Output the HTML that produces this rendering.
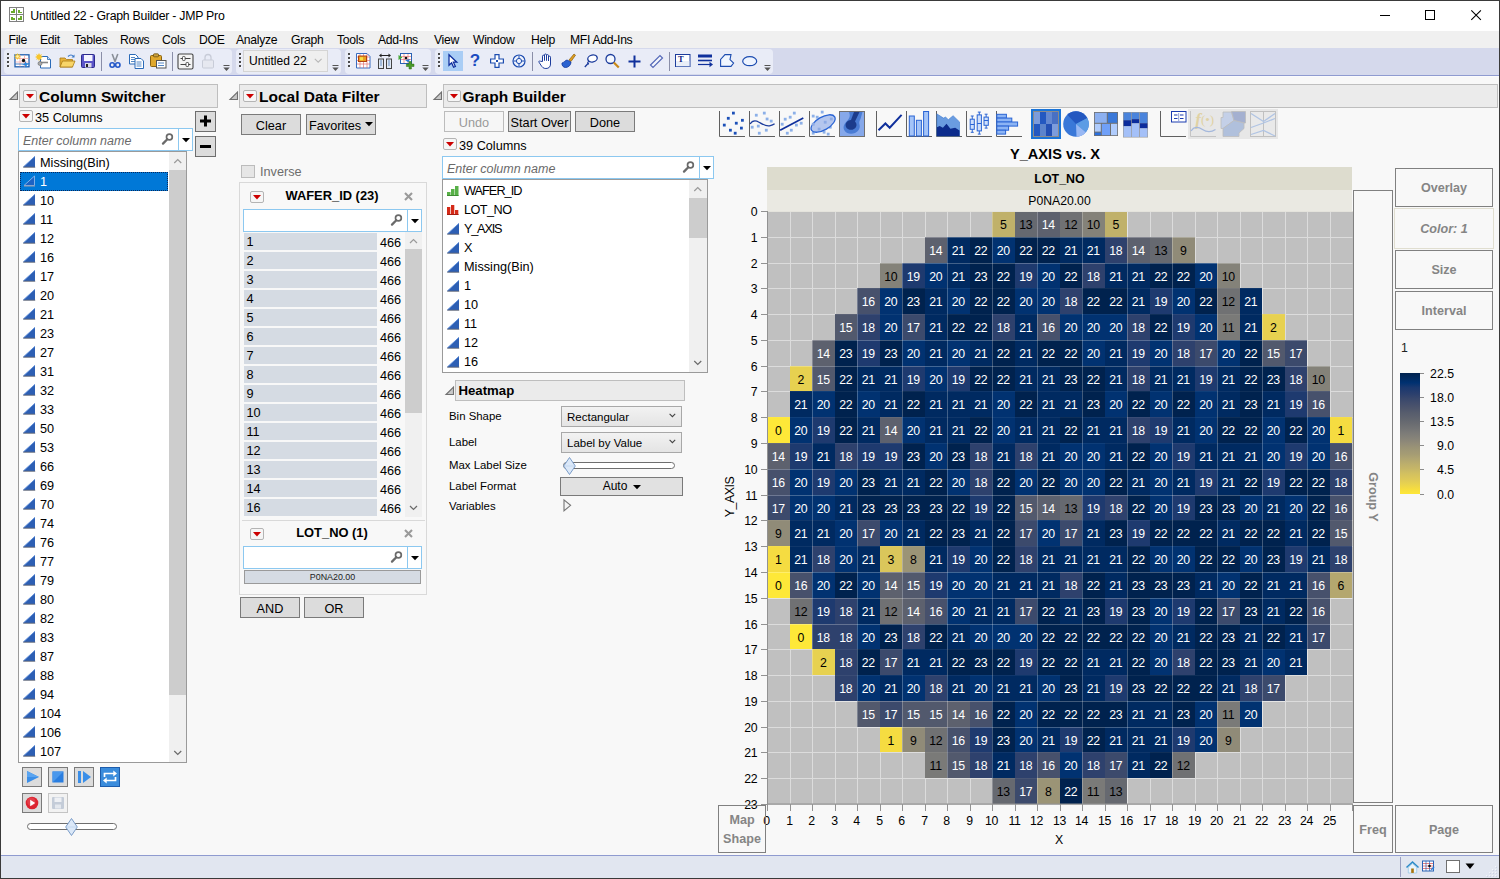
<!DOCTYPE html>
<html lang="en"><head><meta charset="utf-8"><title>Untitled 22 - Graph Builder - JMP Pro</title>
<style>
html,body{margin:0;padding:0;background:#f8f8f8;}
body{width:1500px;height:879px;overflow:hidden;font-family:"Liberation Sans", sans-serif;font-size:12.6px;color:#000;}
#app{position:relative;width:1500px;height:879px;overflow:hidden;background:#f8f8f8;}
#app div,#app svg{position:absolute;box-sizing:border-box;}
#app svg{overflow:visible;}
#app svg text{font-family:"Liberation Sans",sans-serif;}
</style></head><body><div id="app">
<div style="left:0px;top:0px;width:1500px;height:879px;background:#f8f8f8;border:1px solid #3a3a3a;"></div>
<div style="left:1px;top:1px;width:1498px;height:30px;background:#fff;"></div>
<svg style="left:9px;top:7px;" width="15" height="15" viewBox="0 0 15 15"><g shape-rendering="crispEdges"><rect x="0" y="0" width="15" height="15" fill="#808080"/><rect x="1" y="1" width="6" height="6" fill="#fff"/><rect x="8" y="1" width="6" height="6" fill="#fff"/><rect x="1" y="8" width="6" height="6" fill="#fff"/><rect x="8" y="8" width="6" height="6" fill="#fff"/><path d="M2 4h2V2h2v4H2zM9 3h2v2h2v1H9zM2 10h2v1h2v2H2zM9 11h2V9h2v4H9z" fill="#6aaa2c"/></g></svg>
<div style="top:7.800000000000001px;height:17px;line-height:17px;font-size:12.3px;white-space:pre;letter-spacing:-0.25px;left:30.3px;">Untitled 22 - Graph Builder - JMP Pro</div>
<svg style="left:1380px;top:10px;" width="11" height="11" viewBox="0 0 11 11"><path d="M0 5.5h10" stroke="#000" stroke-width="1"/></svg>
<svg style="left:1425px;top:10px;" width="11" height="11" viewBox="0 0 11 11"><rect x="0.5" y="0.5" width="9" height="9" fill="none" stroke="#000" stroke-width="1"/></svg>
<svg style="left:1471px;top:10px;" width="11" height="11" viewBox="0 0 11 11"><path d="M0.3 0.3l9.6 9.6M9.9 0.3l-9.6 9.6" stroke="#000" stroke-width="1.1"/></svg>
<div style="left:1px;top:31px;width:1498px;height:17px;background:#f0f0f0;"></div>
<div style="top:31.5px;height:17px;line-height:17px;font-size:12.2px;white-space:pre;letter-spacing:-0.3px;left:8.5px;">File</div>
<div style="top:31.5px;height:17px;line-height:17px;font-size:12.2px;white-space:pre;letter-spacing:-0.3px;left:40px;">Edit</div>
<div style="top:31.5px;height:17px;line-height:17px;font-size:12.2px;white-space:pre;letter-spacing:-0.3px;left:74px;">Tables</div>
<div style="top:31.5px;height:17px;line-height:17px;font-size:12.2px;white-space:pre;letter-spacing:-0.3px;left:120px;">Rows</div>
<div style="top:31.5px;height:17px;line-height:17px;font-size:12.2px;white-space:pre;letter-spacing:-0.3px;left:162px;">Cols</div>
<div style="top:31.5px;height:17px;line-height:17px;font-size:12.2px;white-space:pre;letter-spacing:-0.3px;left:199px;">DOE</div>
<div style="top:31.5px;height:17px;line-height:17px;font-size:12.2px;white-space:pre;letter-spacing:-0.3px;left:236px;">Analyze</div>
<div style="top:31.5px;height:17px;line-height:17px;font-size:12.2px;white-space:pre;letter-spacing:-0.3px;left:291px;">Graph</div>
<div style="top:31.5px;height:17px;line-height:17px;font-size:12.2px;white-space:pre;letter-spacing:-0.3px;left:337px;">Tools</div>
<div style="top:31.5px;height:17px;line-height:17px;font-size:12.2px;white-space:pre;letter-spacing:-0.3px;left:378px;">Add-Ins</div>
<div style="top:31.5px;height:17px;line-height:17px;font-size:12.2px;white-space:pre;letter-spacing:-0.3px;left:434px;">View</div>
<div style="top:31.5px;height:17px;line-height:17px;font-size:12.2px;white-space:pre;letter-spacing:-0.3px;left:473px;">Window</div>
<div style="top:31.5px;height:17px;line-height:17px;font-size:12.2px;white-space:pre;letter-spacing:-0.3px;left:531px;">Help</div>
<div style="top:31.5px;height:17px;line-height:17px;font-size:12.2px;white-space:pre;letter-spacing:-0.3px;left:570px;">MFI Add-Ins</div>
<div style="left:1px;top:48px;width:1498px;height:27px;background:#d5d9ec;"></div>
<div style="left:1px;top:75px;width:1498px;height:1px;background:#8f9bd0;"></div>
<div style="left:1px;top:76px;width:1498px;height:1px;background:#fbfbfd;"></div>
<div style="left:4px;top:49px;width:228px;height:25px;background:#e9ecf7;border-radius:4px;"></div>
<div style="left:236px;top:49px;width:105px;height:25px;background:#e9ecf7;border-radius:4px;"></div>
<div style="left:345px;top:49px;width:86px;height:25px;background:#e9ecf7;border-radius:4px;"></div>
<div style="left:435px;top:49px;width:338px;height:25px;background:#e9ecf7;border-radius:4px;"></div>
<div style="left:1px;top:855px;width:1498px;height:1px;background:#8f9bd0;"></div>
<div style="left:1px;top:856px;width:1498px;height:22px;background:#e1e6f0;"></div>
<div style="left:1400px;top:857px;width:1px;height:20px;background:#9aa0c0;"></div>
<div style="left:1446px;top:860px;width:14px;height:13px;background:#fff;border:1px solid #707070;"></div>
<svg style="left:1465px;top:862.8px;" width="10" height="7" viewBox="0 0 10 7"><path d="M0.5 0.5h9l-4.5 5.5z" fill="#000"/></svg>
<svg style="left:1406px;top:860.8px;" width="13" height="13" viewBox="0 0 13 13"><path d="M0.5 6.5L6.5 1l6 5.5" fill="none" stroke="#2a8ac8" stroke-width="1.6"/><path d="M2.3 6.3v5.7h8.4V6.3L6.5 2.6z" fill="#eaf4fb" stroke="#9cc8e4" stroke-width="0.8"/><rect x="5.2" y="7.5" width="2.6" height="4.4" fill="#a8740c"/></svg>
<svg style="left:1422px;top:860px;" width="13" height="13" viewBox="0 0 13 13"><rect x="0.5" y="1" width="11" height="10" fill="#fff" stroke="#2a62b4" stroke-width="1"/><path d="M1 3.5h10M1 6h10M1 8.5h10" stroke="#e04848" stroke-width="0.7"/><path d="M4 1v10M7.5 1v10" stroke="#2a62b4" stroke-width="0.7"/><circle cx="7.5" cy="6" r="1.3" fill="#111"/><path d="M9 8l3.5-1.2-1.2 3.7-0.8-1.3-1.6 1.6-0.6-0.6 1.6-1.6z" fill="#2a7ad4"/></svg>
<svg style="left:1485px;top:864px;" width="13" height="13" viewBox="0 0 13 13"><rect x="10" y="2" width="1.300" height="1.600" fill="#f6f8fc"/><rect x="10.7" y="2.8" width="1" height="1" fill="#b8c0d8"/><rect x="7" y="5" width="1.300" height="1.600" fill="#f6f8fc"/><rect x="7.7" y="5.8" width="1" height="1" fill="#b8c0d8"/><rect x="10" y="5" width="1.300" height="1.600" fill="#f6f8fc"/><rect x="10.7" y="5.8" width="1" height="1" fill="#b8c0d8"/><rect x="4" y="8" width="1.300" height="1.600" fill="#f6f8fc"/><rect x="4.7" y="8.8" width="1" height="1" fill="#b8c0d8"/><rect x="7" y="8" width="1.300" height="1.600" fill="#f6f8fc"/><rect x="7.7" y="8.8" width="1" height="1" fill="#b8c0d8"/><rect x="10" y="8" width="1.300" height="1.600" fill="#f6f8fc"/><rect x="10.7" y="8.8" width="1" height="1" fill="#b8c0d8"/><rect x="1" y="11" width="1.300" height="1.600" fill="#f6f8fc"/><rect x="1.7" y="11.8" width="1" height="1" fill="#b8c0d8"/><rect x="4" y="11" width="1.300" height="1.600" fill="#f6f8fc"/><rect x="4.7" y="11.8" width="1" height="1" fill="#b8c0d8"/><rect x="7" y="11" width="1.300" height="1.600" fill="#f6f8fc"/><rect x="7.7" y="11.8" width="1" height="1" fill="#b8c0d8"/><rect x="10" y="11" width="1.300" height="1.600" fill="#f6f8fc"/><rect x="10.7" y="11.8" width="1" height="1" fill="#b8c0d8"/></svg>
<svg style="left:7px;top:53px;" width="3" height="16" viewBox="0 0 3 16"><rect x="0" y="0" width="2" height="2" fill="#4a4a4a"/><rect x="1" y="1" width="2" height="2" fill="#ffffff" opacity="0.550"/><rect x="0.500" y="0.5" width="1.500" height="1.500" fill="#4a4a4a"/><rect x="0" y="4" width="2" height="2" fill="#4a4a4a"/><rect x="1" y="5" width="2" height="2" fill="#ffffff" opacity="0.550"/><rect x="0.500" y="4.5" width="1.500" height="1.500" fill="#4a4a4a"/><rect x="0" y="8" width="2" height="2" fill="#4a4a4a"/><rect x="1" y="9" width="2" height="2" fill="#ffffff" opacity="0.550"/><rect x="0.500" y="8.5" width="1.500" height="1.500" fill="#4a4a4a"/><rect x="0" y="12" width="2" height="2" fill="#4a4a4a"/><rect x="1" y="13" width="2" height="2" fill="#ffffff" opacity="0.550"/><rect x="0.500" y="12.5" width="1.500" height="1.500" fill="#4a4a4a"/></svg>
<svg style="left:14px;top:53px;" width="17" height="16" viewBox="0 0 17 16"><rect x="1" y="1.800" width="14" height="12" fill="#fff" stroke="#1f5fb0" stroke-width="1.300"/><path d="M1.500 5.500h13M1.500 9h13M6 2v11.500M10.500 2v11.500" stroke="#f0a0a0" stroke-width="0.700"/><path d="M1.500 11h13" stroke="#1f5fb0" stroke-width="0.800"/><circle cx="9.500" cy="7.500" r="1.700" fill="#111"/><path d="M11.500 8l0.900 2.300 3.800 0.200-3.200 1.300-1 3.200-1-2.700-3.500-0.300 3-1.300z" fill="#2a86dc"/><path d="M3.500 0l0.800 1.800 1.900-1-1 1.900L7 3.500l-1.800 0.800 1 1.900-1.900-1L3.500 7l-0.800-1.800-1.900 1 1-1.900L0 3.500l1.800-0.800-1-1.900 1.900 1z" fill="#f7c52e"/><circle cx="3.500" cy="3.500" r="1.300" fill="#fff2b0"/></svg>
<svg style="left:36px;top:53px;" width="16" height="16" viewBox="0 0 16 16"><path d="M4.5 3.5h7l3 3v8.5h-10z" fill="#fff" stroke="#2a6ab8" stroke-width="1"/><path d="M11.5 3.5v3h3" fill="#cfe0f5" stroke="#2a6ab8" stroke-width="0.8"/><path d="M3 9.5h9" stroke="#888" stroke-width="1.6"/><circle cx="4" cy="10.5" r="2" fill="#aaa" stroke="#666" stroke-width="0.6"/><path d="M3 0l1 2 2-1-1 2 2 1-2 1 1 2-2-1-1 2-1-2-2 1 1-2-2-1 2-1-1-2 2 1z" fill="#f7c52e"/></svg>
<svg style="left:59px;top:53px;" width="16" height="16" viewBox="0 0 16 16"><path d="M1 5h5l1.5 1.5h6V14H1z" fill="#e8b33a" stroke="#a87a14" stroke-width="0.8"/><path d="M1 14l2.5-6H16l-2.5 6z" fill="#f8d568" stroke="#a87a14" stroke-width="0.8"/><path d="M9 3.5c2-2 4-2 5.5 0" fill="none" stroke="#3a78c8" stroke-width="1.2"/><path d="M15.5 1.5v3h-3z" fill="#3a78c8"/></svg>
<svg style="left:80px;top:53px;" width="16" height="16" viewBox="0 0 16 16"><rect x="1.5" y="1.5" width="13" height="13" rx="1" fill="#5a54c8" stroke="#2c2a8c" stroke-width="1"/><rect x="4" y="2" width="8.5" height="6" fill="#f4f4ff"/><rect x="5" y="10" width="6.5" height="4.5" fill="#d8d8e8"/><rect x="6" y="11" width="2" height="3" fill="#222"/></svg>
<div style="left:101px;top:52px;width:1px;height:19px;background:#8a8ea8;"></div>
<svg style="left:109px;top:53px;" width="12" height="16" viewBox="0 0 12 16"><path d="M3.2 1l3 8M8.8 1l-3 8" stroke="#8a8f98" stroke-width="1.6" fill="none"/><circle cx="3.2" cy="12" r="2.2" fill="none" stroke="#2458c8" stroke-width="1.6"/><circle cx="8.8" cy="12" r="2.2" fill="none" stroke="#2458c8" stroke-width="1.6"/></svg>
<svg style="left:129px;top:54px;" width="15" height="15" viewBox="0 0 15 15"><path d="M0.5 0.5h6l2.5 2.5v7h-8.5z" fill="#fff" stroke="#2a6ab8" stroke-width="1"/><path d="M2 3.5h4M2 5.5h5M2 7.5h5" stroke="#2a6ab8" stroke-width="0.8"/><path d="M6 4.5h6l2.5 2.5v7.5H6z" fill="#fff" stroke="#2a6ab8" stroke-width="1"/><path d="M7.5 8h5M7.5 10h5M7.5 12h5" stroke="#2a6ab8" stroke-width="0.8"/></svg>
<svg style="left:150px;top:53px;" width="17" height="16" viewBox="0 0 17 16"><rect x="0.5" y="2.5" width="11" height="11" rx="1" fill="#e0a82c" stroke="#8a6410" stroke-width="1"/><rect x="3.5" y="0.8" width="5" height="3" rx="0.8" fill="#caa040" stroke="#6c5010" stroke-width="0.8"/><rect x="6.5" y="7.5" width="9.5" height="7.5" fill="#fff" stroke="#555" stroke-width="1"/><path d="M8 10h6M8 12.5h6" stroke="#2a6ab8" stroke-width="0.8"/></svg>
<div style="left:172px;top:52px;width:1px;height:19px;background:#8a8ea8;"></div>
<svg style="left:177px;top:53px;" width="17" height="17" viewBox="0 0 17 17"><rect x="1" y="1" width="15" height="15" rx="1.5" fill="#f4f4f4" stroke="#444" stroke-width="1.1"/><path d="M3.5 5.5h10M3.5 11.5h10" stroke="#444" stroke-width="1"/><rect x="5.5" y="3.5" width="2.6" height="4" rx="0.8" fill="#fff" stroke="#444" stroke-width="0.9"/><rect x="9" y="9.5" width="2.6" height="4" rx="0.8" fill="#fff" stroke="#444" stroke-width="0.9"/></svg>
<svg style="left:201px;top:53px;" width="14" height="16" viewBox="0 0 14 16"><path d="M4 7V4.5a3 3 0 016 0V7" fill="none" stroke="#c8ccd8" stroke-width="1.3"/><rect x="1.5" y="7" width="11" height="8" rx="1" fill="#e6e8f0" stroke="#c8ccd8" stroke-width="1"/></svg>
<svg style="left:223px;top:65px;" width="7" height="7" viewBox="0 0 7 7"><path d="M0.5 0.5h6" stroke="#555" stroke-width="1"/><path d="M0.3 2.6h6.4L3.5 6z" fill="#555"/></svg>
<svg style="left:239px;top:53px;" width="3" height="16" viewBox="0 0 3 16"><rect x="0" y="0" width="2" height="2" fill="#4a4a4a"/><rect x="1" y="1" width="2" height="2" fill="#ffffff" opacity="0.550"/><rect x="0.500" y="0.5" width="1.500" height="1.500" fill="#4a4a4a"/><rect x="0" y="4" width="2" height="2" fill="#4a4a4a"/><rect x="1" y="5" width="2" height="2" fill="#ffffff" opacity="0.550"/><rect x="0.500" y="4.5" width="1.500" height="1.500" fill="#4a4a4a"/><rect x="0" y="8" width="2" height="2" fill="#4a4a4a"/><rect x="1" y="9" width="2" height="2" fill="#ffffff" opacity="0.550"/><rect x="0.500" y="8.5" width="1.500" height="1.500" fill="#4a4a4a"/><rect x="0" y="12" width="2" height="2" fill="#4a4a4a"/><rect x="1" y="13" width="2" height="2" fill="#ffffff" opacity="0.550"/><rect x="0.500" y="12.5" width="1.500" height="1.500" fill="#4a4a4a"/></svg>
<div style="left:243px;top:50px;width:85px;height:22px;background:#efefef;border:1px solid #d4d4d4;"></div>
<div style="top:52.5px;height:17px;line-height:17px;font-size:12.05px;white-space:pre;left:249px;">Untitled 22</div>
<svg style="left:314px;top:58px;" width="9" height="6" viewBox="0 0 9 6"><path d="M0.8 0.8l3.4 3.4 3.4-3.4" fill="none" stroke="#b8b8b8" stroke-width="1.1"/></svg>
<svg style="left:332px;top:65px;" width="7" height="7" viewBox="0 0 7 7"><path d="M0.5 0.5h6" stroke="#555" stroke-width="1"/><path d="M0.3 2.6h6.4L3.5 6z" fill="#555"/></svg>
<svg style="left:348px;top:53px;" width="3" height="16" viewBox="0 0 3 16"><rect x="0" y="0" width="2" height="2" fill="#4a4a4a"/><rect x="1" y="1" width="2" height="2" fill="#ffffff" opacity="0.550"/><rect x="0.500" y="0.5" width="1.500" height="1.500" fill="#4a4a4a"/><rect x="0" y="4" width="2" height="2" fill="#4a4a4a"/><rect x="1" y="5" width="2" height="2" fill="#ffffff" opacity="0.550"/><rect x="0.500" y="4.5" width="1.500" height="1.500" fill="#4a4a4a"/><rect x="0" y="8" width="2" height="2" fill="#4a4a4a"/><rect x="1" y="9" width="2" height="2" fill="#ffffff" opacity="0.550"/><rect x="0.500" y="8.5" width="1.500" height="1.500" fill="#4a4a4a"/><rect x="0" y="12" width="2" height="2" fill="#4a4a4a"/><rect x="1" y="13" width="2" height="2" fill="#ffffff" opacity="0.550"/><rect x="0.500" y="12.5" width="1.500" height="1.500" fill="#4a4a4a"/></svg>
<svg style="left:356px;top:53px;" width="15" height="16" viewBox="0 0 15 16"><path d="M0.5 0.5h10.5l3 3v11.5H0.5z" fill="#fff" stroke="#3a6cc0" stroke-width="1"/><path d="M1 4h13M1 7.5h13M1 11h13M4 1v14M7.5 1v14M11 1v14" stroke="#e06060" stroke-width="0.6"/><rect x="2.5" y="3" width="8" height="5.5" fill="#e8a020" stroke="#b04010" stroke-width="1"/><rect x="4" y="4.2" width="3" height="3" fill="#f8e048"/></svg>
<svg style="left:377px;top:53px;" width="16" height="16" viewBox="0 0 16 16"><path d="M3 2.5h10" stroke="#222" stroke-width="1"/><path d="M2 2.5l2.5-2v4zM14 2.5l-2.500-2v4z" fill="#222"/><rect x="1.5" y="6" width="5" height="9.5" fill="#dfe8f4" stroke="#444" stroke-width="1"/><rect x="9.5" y="6" width="5" height="9.5" fill="#dfe8f4" stroke="#444" stroke-width="1"/><path d="M3 8h2M3 10h2M3 12h2M11 8h2M11 10h2M11 12h2" stroke="#4a78b8" stroke-width="0.8"/></svg>
<svg style="left:398px;top:53px;" width="17" height="16" viewBox="0 0 17 16"><rect x="2.500" y="0.5" width="11" height="10" fill="#fff" stroke="#2a62b4" stroke-width="1"/><path d="M3 3.500h10M3 6.500h10M6 1v9M10 1v9" stroke="#e06060" stroke-width="0.6"/><path d="M0.5 2l4 2.500-4 2.500z" fill="#48a838"/><circle cx="8" cy="5" r="1.300" fill="#111"/><path d="M7 7l5-1-1.500 3.500z" fill="#2a7ad4"/><path d="M11 8.500h2.400v2.600H16v2.400h-2.600V16H11v-2.500H8.400v-2.400H11z" fill="#4a9c2a" stroke="#2c6c14" stroke-width="0.5"/></svg>
<svg style="left:422px;top:65px;" width="7" height="7" viewBox="0 0 7 7"><path d="M0.5 0.5h6" stroke="#555" stroke-width="1"/><path d="M0.3 2.6h6.4L3.5 6z" fill="#555"/></svg>
<svg style="left:438px;top:53px;" width="3" height="16" viewBox="0 0 3 16"><rect x="0" y="0" width="2" height="2" fill="#4a4a4a"/><rect x="1" y="1" width="2" height="2" fill="#ffffff" opacity="0.550"/><rect x="0.500" y="0.5" width="1.500" height="1.500" fill="#4a4a4a"/><rect x="0" y="4" width="2" height="2" fill="#4a4a4a"/><rect x="1" y="5" width="2" height="2" fill="#ffffff" opacity="0.550"/><rect x="0.500" y="4.5" width="1.500" height="1.500" fill="#4a4a4a"/><rect x="0" y="8" width="2" height="2" fill="#4a4a4a"/><rect x="1" y="9" width="2" height="2" fill="#ffffff" opacity="0.550"/><rect x="0.500" y="8.5" width="1.500" height="1.500" fill="#4a4a4a"/><rect x="0" y="12" width="2" height="2" fill="#4a4a4a"/><rect x="1" y="13" width="2" height="2" fill="#ffffff" opacity="0.550"/><rect x="0.500" y="12.5" width="1.500" height="1.500" fill="#4a4a4a"/></svg>
<div style="left:443px;top:51px;width:20px;height:20px;background:#a9cdf5;"></div>
<svg style="left:448px;top:54px;" width="10" height="15" viewBox="0 0 10 15"><path d="M1 0.800v10.500l2.600-2.400 2 4.400 1.800-0.800-2-4.300h3.400z" fill="#fff" stroke="#0c2c9c" stroke-width="1.250"/></svg>
<div style="top:51.0px;height:20px;line-height:20px;font-size:17px;white-space:pre;font-weight:bold;color:#1c4cc0;left:468.0px;width:14px;text-align:center;">?</div>
<svg style="left:490px;top:54px;" width="14" height="14" viewBox="0 0 14 14"><path d="M5 0.600h4v4.400h4.400v4H9v4.400H5V9H0.600V5H5z" fill="#fff" stroke="#1c4cb0" stroke-width="1.2"/><rect x="6" y="6" width="2" height="2" fill="#1c4cb0"/></svg>
<svg style="left:512px;top:54px;" width="14" height="14" viewBox="0 0 14 14"><circle cx="7" cy="7" r="6" fill="#eef2fc" stroke="#1c4cb0" stroke-width="1.200"/><circle cx="7" cy="7" r="2.600" fill="none" stroke="#1c4cb0" stroke-width="1"/><path d="M7 1.500v3M7 9.500v3M1.500 7h3M9.500 7h3" stroke="#1c4cb0" stroke-width="1"/></svg>
<div style="left:532px;top:52px;width:1px;height:19px;background:#8a8ea8;"></div>
<svg style="left:538px;top:53px;" width="17" height="16" viewBox="0 0 17 16"><path d="M4.500 8.500V3.200a1 1 0 012 0V7.500 2a1 1 0 012 0v5.500V2.600a1 1 0 012 0v5.400V4.200a1 1 0 012 0V11c0 2.800-1.600 4.500-4.600 4.500-2.600 0-3.600-1.200-5-3.400L1 9.200c-0.500-1 0.800-1.800 1.600-0.900z" fill="#fff" stroke="#1c3c9c" stroke-width="1"/></svg>
<svg style="left:561px;top:53px;" width="15" height="16" viewBox="0 0 15 16"><path d="M8 7l5-6 1.500 1.200L10 8.500z" fill="#e0a020" stroke="#8a5c0c" stroke-width="0.700"/><path d="M1 10c2-0.500 3-2.500 5-3l4 2c0 3-2.500 5.500-5.500 5.500C2.500 14.500 0.500 12.500 1 10z" fill="#2a62d0" stroke="#1438a0" stroke-width="0.800"/></svg>
<svg style="left:584px;top:54px;" width="14" height="14" viewBox="0 0 14 14"><ellipse cx="8.500" cy="4.500" rx="4.800" ry="3.400" fill="#fff" stroke="#1c3c9c" stroke-width="1.300" transform="rotate(-12 8.500 4.500)"/><path d="M5 7.500c-1.500 0.500-2 2 0 2.500M4.500 9L0.800 13" fill="none" stroke="#1c3c9c" stroke-width="1.300"/></svg>
<svg style="left:605px;top:53px;" width="15" height="16" viewBox="0 0 15 16"><circle cx="5.500" cy="6" r="4.500" fill="#f4f8ff" stroke="#1c3c9c" stroke-width="1.300"/><path d="M8.800 9.500l5 5" stroke="#c88818" stroke-width="2.200"/></svg>
<svg style="left:628px;top:55px;" width="13" height="13" viewBox="0 0 13 13"><path d="M6.500 0.500v12M0.500 6.500h12" stroke="#10309c" stroke-width="2"/></svg>
<svg style="left:649px;top:54px;" width="15" height="15" viewBox="0 0 15 15"><path d="M1.500 11L11 1.500l2.500 2.500L4 13.500z" fill="#f4f6fc" stroke="#5468b8" stroke-width="1.200"/></svg>
<div style="left:669px;top:52px;width:1px;height:19px;background:#8a8ea8;"></div>
<svg style="left:675px;top:54px;" width="16" height="14" viewBox="0 0 16 14"><rect x="0.500" y="0.500" width="14.500" height="12" fill="#fff" stroke="#1c3c9c" stroke-width="1"/><path d="M1 8h14M1 10h14M1 12h14" stroke="#c8d4ec" stroke-width="0.800"/><text x="5.800" y="7.600" font-size="8.500" font-weight="bold" text-anchor="middle" fill="#10207c" style="font-family:'Liberation Serif',serif">T</text></svg>
<svg style="left:698px;top:54px;" width="16" height="14" viewBox="0 0 16 14"><path d="M0 2h14" stroke="#10309c" stroke-width="3"/><path d="M0 6.500h14" stroke="#10309c" stroke-width="1.600"/><path d="M0 10.500h12" stroke="#10309c" stroke-width="1.200"/><path d="M11.500 7.800l3.500 2.700-3.500 2.700z" fill="#10309c"/></svg>
<svg style="left:720px;top:54px;" width="15" height="14" viewBox="0 0 15 14"><path d="M0.600 12.400V5.500L5 0.600h6l-1 5 3.600 3.400-2.600 3.400z" fill="#f0f6ff" stroke="#1c4cb0" stroke-width="1.100"/></svg>
<svg style="left:742px;top:56px;" width="16" height="11" viewBox="0 0 16 11"><ellipse cx="7.700" cy="5.200" rx="7" ry="4.500" fill="#eef4ff" stroke="#1c4cb0" stroke-width="1.200"/></svg>
<svg style="left:764px;top:65px;" width="7" height="7" viewBox="0 0 7 7"><path d="M0.5 0.5h6" stroke="#555" stroke-width="1"/><path d="M0.3 2.6h6.4L3.5 6z" fill="#555"/></svg>
<div style="left:19px;top:84px;width:199px;height:24px;background:#ebebeb;border:1px solid #bebebe;"></div>
<svg style="left:9px;top:91px;" width="10" height="10" viewBox="0 0 10 10"><path d="M8.500 1V8.500H1z" fill="#c8c8c8" stroke="#707070" stroke-width="1.100" stroke-linejoin="miter"/></svg>
<div style="left:23px;top:90px;width:14px;height:12px;background:#f6f6f6;border:1px solid #b4b4b4;border-radius:2px;"></div>
<svg style="left:26px;top:94px;" width="8" height="5" viewBox="0 0 8 5"><path d="M0 0h8L4 4.500z" fill="#cc0000"/></svg>
<div style="top:85.5px;height:22px;line-height:22px;font-size:15.5px;white-space:pre;font-weight:bold;left:39px;">Column Switcher</div>
<div style="left:19px;top:110px;width:14px;height:12px;background:#f6f6f6;border:1px solid #b4b4b4;border-radius:2px;"></div>
<svg style="left:22px;top:114px;" width="8" height="5" viewBox="0 0 8 5"><path d="M0 0h8L4 4.500z" fill="#cc0000"/></svg>
<div style="top:108.8px;height:18px;line-height:18px;font-size:12.7px;white-space:pre;left:35px;">35 Columns</div>
<div style="left:18px;top:128px;width:175px;height:23px;background:#fff;border:1px solid #8cc8f0;"></div>
<div style="left:178px;top:129px;width:1px;height:21px;background:#8cc8f0;"></div>
<div style="top:131.7px;height:18px;line-height:18px;font-size:12.5px;white-space:pre;font-style:italic;color:#6a6a6a;left:23px;">Enter column name</div>
<svg style="left:161px;top:132px;" width="13" height="14" viewBox="0 0 13 14"><circle cx="8.400" cy="5" r="2.900" fill="none" stroke="#6a6a6a" stroke-width="1.700"/><path d="M6.300 7.300L2 11.600" stroke="#6a6a6a" stroke-width="2.300" stroke-linecap="round"/></svg>
<svg style="left:181.5px;top:137.5px;" width="8" height="5" viewBox="0 0 8 5"><path d="M0 0h8L4 4.200z" fill="#000"/></svg>
<div style="left:195px;top:111px;width:21px;height:21px;background:#dcdcdc;border:1px solid #6e6e6e;"></div>
<svg style="left:195px;top:111px;" width="21" height="21" viewBox="0 0 21 21"><path d="M10.500 4.500v11M5 10h11" stroke="#000" stroke-width="3"/></svg>
<div style="left:195px;top:136px;width:21px;height:21px;background:#dcdcdc;border:1px solid #6e6e6e;"></div>
<svg style="left:195px;top:136px;" width="21" height="21" viewBox="0 0 21 21"><path d="M5 10.500h11" stroke="#000" stroke-width="3"/></svg>
<div style="left:18px;top:151px;width:169px;height:612px;background:#fff;border:1px solid #9a9a9a;"></div>
<div style="left:168.5px;top:152px;width:17.5px;height:610px;background:#f0f0f0;"></div>
<div style="left:168.5px;top:170px;width:17.5px;height:525px;background:#cdcdcd;"></div>
<svg style="left:168.5px;top:157px;" width="17.5" height="8" viewBox="0 0 17.5 8"><path d="M5.25 6l3.500-3.500 3.500 3.500" fill="none" stroke="#9a9a9a" stroke-width="1.200"/></svg>
<svg style="left:168.5px;top:749px;" width="17.5" height="8" viewBox="0 0 17.5 8"><path d="M5.25 2l3.500 3.500 3.500-3.500" fill="none" stroke="#6a6a6a" stroke-width="1.200"/></svg>
<svg style="left:23px;top:156px;" width="13" height="12" viewBox="0 0 13 12"><path d="M12 0.300V11H0.300z" fill="#2d5fb4"/><path d="M0.300 11L12 0.300" stroke="#5c8cd8" stroke-width="0.900"/><path d="M0.300 11.200H12.200" stroke="#5c6478" stroke-width="1"/></svg>
<div style="top:153.5px;height:18px;line-height:18px;font-size:12.7px;white-space:pre;left:40px;">Missing(Bin)</div>
<div style="left:20px;top:172px;width:148px;height:19px;background:#0078d7;border:1px dotted #0a2a5c;"></div>
<svg style="left:23px;top:175px;" width="13" height="12" viewBox="0 0 13 12"><path d="M11.500 1V10.500H1z" fill="#1c62c4" stroke="#8cb8ec" stroke-width="0.900" stroke-linejoin="round"/><path d="M1 11H12" stroke="#9a9aa8" stroke-width="1"/></svg>
<div style="top:172.5px;height:18px;line-height:18px;font-size:12.7px;white-space:pre;color:#fff;left:40px;">1</div>
<svg style="left:23px;top:194px;" width="13" height="12" viewBox="0 0 13 12"><path d="M12 0.300V11H0.300z" fill="#2d5fb4"/><path d="M0.300 11L12 0.300" stroke="#5c8cd8" stroke-width="0.900"/><path d="M0.300 11.200H12.200" stroke="#5c6478" stroke-width="1"/></svg>
<div style="top:191.5px;height:18px;line-height:18px;font-size:12.7px;white-space:pre;left:40px;">10</div>
<svg style="left:23px;top:213px;" width="13" height="12" viewBox="0 0 13 12"><path d="M12 0.300V11H0.300z" fill="#2d5fb4"/><path d="M0.300 11L12 0.300" stroke="#5c8cd8" stroke-width="0.900"/><path d="M0.300 11.200H12.200" stroke="#5c6478" stroke-width="1"/></svg>
<div style="top:210.5px;height:18px;line-height:18px;font-size:12.7px;white-space:pre;left:40px;">11</div>
<svg style="left:23px;top:232px;" width="13" height="12" viewBox="0 0 13 12"><path d="M12 0.300V11H0.300z" fill="#2d5fb4"/><path d="M0.300 11L12 0.300" stroke="#5c8cd8" stroke-width="0.900"/><path d="M0.300 11.200H12.200" stroke="#5c6478" stroke-width="1"/></svg>
<div style="top:229.5px;height:18px;line-height:18px;font-size:12.7px;white-space:pre;left:40px;">12</div>
<svg style="left:23px;top:251px;" width="13" height="12" viewBox="0 0 13 12"><path d="M12 0.300V11H0.300z" fill="#2d5fb4"/><path d="M0.300 11L12 0.300" stroke="#5c8cd8" stroke-width="0.900"/><path d="M0.300 11.200H12.200" stroke="#5c6478" stroke-width="1"/></svg>
<div style="top:248.5px;height:18px;line-height:18px;font-size:12.7px;white-space:pre;left:40px;">16</div>
<svg style="left:23px;top:270px;" width="13" height="12" viewBox="0 0 13 12"><path d="M12 0.300V11H0.300z" fill="#2d5fb4"/><path d="M0.300 11L12 0.300" stroke="#5c8cd8" stroke-width="0.900"/><path d="M0.300 11.200H12.200" stroke="#5c6478" stroke-width="1"/></svg>
<div style="top:267.5px;height:18px;line-height:18px;font-size:12.7px;white-space:pre;left:40px;">17</div>
<svg style="left:23px;top:289px;" width="13" height="12" viewBox="0 0 13 12"><path d="M12 0.300V11H0.300z" fill="#2d5fb4"/><path d="M0.300 11L12 0.300" stroke="#5c8cd8" stroke-width="0.900"/><path d="M0.300 11.200H12.200" stroke="#5c6478" stroke-width="1"/></svg>
<div style="top:286.5px;height:18px;line-height:18px;font-size:12.7px;white-space:pre;left:40px;">20</div>
<svg style="left:23px;top:308px;" width="13" height="12" viewBox="0 0 13 12"><path d="M12 0.300V11H0.300z" fill="#2d5fb4"/><path d="M0.300 11L12 0.300" stroke="#5c8cd8" stroke-width="0.900"/><path d="M0.300 11.200H12.200" stroke="#5c6478" stroke-width="1"/></svg>
<div style="top:305.5px;height:18px;line-height:18px;font-size:12.7px;white-space:pre;left:40px;">21</div>
<svg style="left:23px;top:327px;" width="13" height="12" viewBox="0 0 13 12"><path d="M12 0.300V11H0.300z" fill="#2d5fb4"/><path d="M0.300 11L12 0.300" stroke="#5c8cd8" stroke-width="0.900"/><path d="M0.300 11.200H12.200" stroke="#5c6478" stroke-width="1"/></svg>
<div style="top:324.5px;height:18px;line-height:18px;font-size:12.7px;white-space:pre;left:40px;">23</div>
<svg style="left:23px;top:346px;" width="13" height="12" viewBox="0 0 13 12"><path d="M12 0.300V11H0.300z" fill="#2d5fb4"/><path d="M0.300 11L12 0.300" stroke="#5c8cd8" stroke-width="0.900"/><path d="M0.300 11.200H12.200" stroke="#5c6478" stroke-width="1"/></svg>
<div style="top:343.5px;height:18px;line-height:18px;font-size:12.7px;white-space:pre;left:40px;">27</div>
<svg style="left:23px;top:365px;" width="13" height="12" viewBox="0 0 13 12"><path d="M12 0.300V11H0.300z" fill="#2d5fb4"/><path d="M0.300 11L12 0.300" stroke="#5c8cd8" stroke-width="0.900"/><path d="M0.300 11.200H12.200" stroke="#5c6478" stroke-width="1"/></svg>
<div style="top:362.5px;height:18px;line-height:18px;font-size:12.7px;white-space:pre;left:40px;">31</div>
<svg style="left:23px;top:384px;" width="13" height="12" viewBox="0 0 13 12"><path d="M12 0.300V11H0.300z" fill="#2d5fb4"/><path d="M0.300 11L12 0.300" stroke="#5c8cd8" stroke-width="0.900"/><path d="M0.300 11.200H12.200" stroke="#5c6478" stroke-width="1"/></svg>
<div style="top:381.5px;height:18px;line-height:18px;font-size:12.7px;white-space:pre;left:40px;">32</div>
<svg style="left:23px;top:403px;" width="13" height="12" viewBox="0 0 13 12"><path d="M12 0.300V11H0.300z" fill="#2d5fb4"/><path d="M0.300 11L12 0.300" stroke="#5c8cd8" stroke-width="0.900"/><path d="M0.300 11.200H12.200" stroke="#5c6478" stroke-width="1"/></svg>
<div style="top:400.5px;height:18px;line-height:18px;font-size:12.7px;white-space:pre;left:40px;">33</div>
<svg style="left:23px;top:422px;" width="13" height="12" viewBox="0 0 13 12"><path d="M12 0.300V11H0.300z" fill="#2d5fb4"/><path d="M0.300 11L12 0.300" stroke="#5c8cd8" stroke-width="0.900"/><path d="M0.300 11.200H12.200" stroke="#5c6478" stroke-width="1"/></svg>
<div style="top:419.5px;height:18px;line-height:18px;font-size:12.7px;white-space:pre;left:40px;">50</div>
<svg style="left:23px;top:441px;" width="13" height="12" viewBox="0 0 13 12"><path d="M12 0.300V11H0.300z" fill="#2d5fb4"/><path d="M0.300 11L12 0.300" stroke="#5c8cd8" stroke-width="0.900"/><path d="M0.300 11.200H12.200" stroke="#5c6478" stroke-width="1"/></svg>
<div style="top:438.5px;height:18px;line-height:18px;font-size:12.7px;white-space:pre;left:40px;">53</div>
<svg style="left:23px;top:460px;" width="13" height="12" viewBox="0 0 13 12"><path d="M12 0.300V11H0.300z" fill="#2d5fb4"/><path d="M0.300 11L12 0.300" stroke="#5c8cd8" stroke-width="0.900"/><path d="M0.300 11.200H12.200" stroke="#5c6478" stroke-width="1"/></svg>
<div style="top:457.5px;height:18px;line-height:18px;font-size:12.7px;white-space:pre;left:40px;">66</div>
<svg style="left:23px;top:479px;" width="13" height="12" viewBox="0 0 13 12"><path d="M12 0.300V11H0.300z" fill="#2d5fb4"/><path d="M0.300 11L12 0.300" stroke="#5c8cd8" stroke-width="0.900"/><path d="M0.300 11.200H12.200" stroke="#5c6478" stroke-width="1"/></svg>
<div style="top:476.5px;height:18px;line-height:18px;font-size:12.7px;white-space:pre;left:40px;">69</div>
<svg style="left:23px;top:498px;" width="13" height="12" viewBox="0 0 13 12"><path d="M12 0.300V11H0.300z" fill="#2d5fb4"/><path d="M0.300 11L12 0.300" stroke="#5c8cd8" stroke-width="0.900"/><path d="M0.300 11.200H12.200" stroke="#5c6478" stroke-width="1"/></svg>
<div style="top:495.5px;height:18px;line-height:18px;font-size:12.7px;white-space:pre;left:40px;">70</div>
<svg style="left:23px;top:517px;" width="13" height="12" viewBox="0 0 13 12"><path d="M12 0.300V11H0.300z" fill="#2d5fb4"/><path d="M0.300 11L12 0.300" stroke="#5c8cd8" stroke-width="0.900"/><path d="M0.300 11.200H12.200" stroke="#5c6478" stroke-width="1"/></svg>
<div style="top:514.5px;height:18px;line-height:18px;font-size:12.7px;white-space:pre;left:40px;">74</div>
<svg style="left:23px;top:536px;" width="13" height="12" viewBox="0 0 13 12"><path d="M12 0.300V11H0.300z" fill="#2d5fb4"/><path d="M0.300 11L12 0.300" stroke="#5c8cd8" stroke-width="0.900"/><path d="M0.300 11.200H12.200" stroke="#5c6478" stroke-width="1"/></svg>
<div style="top:533.5px;height:18px;line-height:18px;font-size:12.7px;white-space:pre;left:40px;">76</div>
<svg style="left:23px;top:555px;" width="13" height="12" viewBox="0 0 13 12"><path d="M12 0.300V11H0.300z" fill="#2d5fb4"/><path d="M0.300 11L12 0.300" stroke="#5c8cd8" stroke-width="0.900"/><path d="M0.300 11.200H12.200" stroke="#5c6478" stroke-width="1"/></svg>
<div style="top:552.5px;height:18px;line-height:18px;font-size:12.7px;white-space:pre;left:40px;">77</div>
<svg style="left:23px;top:574px;" width="13" height="12" viewBox="0 0 13 12"><path d="M12 0.300V11H0.300z" fill="#2d5fb4"/><path d="M0.300 11L12 0.300" stroke="#5c8cd8" stroke-width="0.900"/><path d="M0.300 11.200H12.200" stroke="#5c6478" stroke-width="1"/></svg>
<div style="top:571.5px;height:18px;line-height:18px;font-size:12.7px;white-space:pre;left:40px;">79</div>
<svg style="left:23px;top:593px;" width="13" height="12" viewBox="0 0 13 12"><path d="M12 0.300V11H0.300z" fill="#2d5fb4"/><path d="M0.300 11L12 0.300" stroke="#5c8cd8" stroke-width="0.900"/><path d="M0.300 11.200H12.200" stroke="#5c6478" stroke-width="1"/></svg>
<div style="top:590.5px;height:18px;line-height:18px;font-size:12.7px;white-space:pre;left:40px;">80</div>
<svg style="left:23px;top:612px;" width="13" height="12" viewBox="0 0 13 12"><path d="M12 0.300V11H0.300z" fill="#2d5fb4"/><path d="M0.300 11L12 0.300" stroke="#5c8cd8" stroke-width="0.900"/><path d="M0.300 11.200H12.200" stroke="#5c6478" stroke-width="1"/></svg>
<div style="top:609.5px;height:18px;line-height:18px;font-size:12.7px;white-space:pre;left:40px;">82</div>
<svg style="left:23px;top:631px;" width="13" height="12" viewBox="0 0 13 12"><path d="M12 0.300V11H0.300z" fill="#2d5fb4"/><path d="M0.300 11L12 0.300" stroke="#5c8cd8" stroke-width="0.900"/><path d="M0.300 11.200H12.200" stroke="#5c6478" stroke-width="1"/></svg>
<div style="top:628.5px;height:18px;line-height:18px;font-size:12.7px;white-space:pre;left:40px;">83</div>
<svg style="left:23px;top:650px;" width="13" height="12" viewBox="0 0 13 12"><path d="M12 0.300V11H0.300z" fill="#2d5fb4"/><path d="M0.300 11L12 0.300" stroke="#5c8cd8" stroke-width="0.900"/><path d="M0.300 11.200H12.200" stroke="#5c6478" stroke-width="1"/></svg>
<div style="top:647.5px;height:18px;line-height:18px;font-size:12.7px;white-space:pre;left:40px;">87</div>
<svg style="left:23px;top:669px;" width="13" height="12" viewBox="0 0 13 12"><path d="M12 0.300V11H0.300z" fill="#2d5fb4"/><path d="M0.300 11L12 0.300" stroke="#5c8cd8" stroke-width="0.900"/><path d="M0.300 11.200H12.200" stroke="#5c6478" stroke-width="1"/></svg>
<div style="top:666.5px;height:18px;line-height:18px;font-size:12.7px;white-space:pre;left:40px;">88</div>
<svg style="left:23px;top:688px;" width="13" height="12" viewBox="0 0 13 12"><path d="M12 0.300V11H0.300z" fill="#2d5fb4"/><path d="M0.300 11L12 0.300" stroke="#5c8cd8" stroke-width="0.900"/><path d="M0.300 11.200H12.200" stroke="#5c6478" stroke-width="1"/></svg>
<div style="top:685.5px;height:18px;line-height:18px;font-size:12.7px;white-space:pre;left:40px;">94</div>
<svg style="left:23px;top:707px;" width="13" height="12" viewBox="0 0 13 12"><path d="M12 0.300V11H0.300z" fill="#2d5fb4"/><path d="M0.300 11L12 0.300" stroke="#5c8cd8" stroke-width="0.900"/><path d="M0.300 11.200H12.200" stroke="#5c6478" stroke-width="1"/></svg>
<div style="top:704.5px;height:18px;line-height:18px;font-size:12.7px;white-space:pre;left:40px;">104</div>
<svg style="left:23px;top:726px;" width="13" height="12" viewBox="0 0 13 12"><path d="M12 0.300V11H0.300z" fill="#2d5fb4"/><path d="M0.300 11L12 0.300" stroke="#5c8cd8" stroke-width="0.900"/><path d="M0.300 11.200H12.200" stroke="#5c6478" stroke-width="1"/></svg>
<div style="top:723.5px;height:18px;line-height:18px;font-size:12.7px;white-space:pre;left:40px;">106</div>
<svg style="left:23px;top:745px;" width="13" height="12" viewBox="0 0 13 12"><path d="M12 0.300V11H0.300z" fill="#2d5fb4"/><path d="M0.300 11L12 0.300" stroke="#5c8cd8" stroke-width="0.900"/><path d="M0.300 11.200H12.200" stroke="#5c6478" stroke-width="1"/></svg>
<div style="top:742.5px;height:18px;line-height:18px;font-size:12.7px;white-space:pre;left:40px;">107</div>
<div style="left:22px;top:767px;width:20px;height:20px;background:#dcdcdc;border:1px solid #7a7a7a;"></div>
<svg style="left:22px;top:767px;" width="20" height="20" viewBox="0 0 20 20"><path d="M5 4l12 6-12 6z" fill="#3a8ee8"/><path d="M5 4l12 6H5z" fill="#5aa4f0"/></svg>
<div style="left:48px;top:767px;width:20px;height:20px;background:#dcdcdc;border:1px solid #7a7a7a;"></div>
<svg style="left:48px;top:767px;" width="20" height="20" viewBox="0 0 20 20"><rect x="4.500" y="4.500" width="11" height="11" fill="#2a7ee0"/><path d="M4.500 4.500h11L4.500 15.500z" fill="#4a98ec"/></svg>
<div style="left:74px;top:767px;width:20px;height:20px;background:#dcdcdc;border:1px solid #7a7a7a;"></div>
<svg style="left:74px;top:767px;" width="20" height="20" viewBox="0 0 20 20"><rect x="4" y="4" width="3" height="12" fill="#3a8ee8"/><path d="M9 4l8 6-8 6z" fill="#3a8ee8"/></svg>
<div style="left:100px;top:767px;width:20px;height:20px;background:#3a8cdc;border:1px solid #1c5cac;"></div>
<svg style="left:100px;top:767px;" width="20" height="20" viewBox="0 0 20 20"><path d="M4.500 10V6.500H14M15.500 10v3.500H6" fill="none" stroke="#fff" stroke-width="1.700"/><path d="M13.300 3.600l3.700 2.900-3.700 2.900zM6.700 10.600L3 13.500l3.700 2.900z" fill="#fff"/></svg>
<div style="left:22px;top:793px;width:20px;height:20px;background:#dcdcdc;border:1px solid #7a7a7a;"></div>
<svg style="left:22px;top:793px;" width="20" height="20" viewBox="0 0 20 20"><circle cx="10" cy="10" r="6.300" fill="#dc2430"/><circle cx="9.300" cy="8.800" r="4.200" fill="#e8505a" opacity="0.600"/><path d="M8.200 6.800l5 3.200-5 3.200z" fill="#fff"/></svg>
<div style="left:48px;top:793px;width:20px;height:20px;background:#f2f2f2;border:1px solid #c4c4c4;"></div>
<svg style="left:48px;top:793px;" width="20" height="20" viewBox="0 0 20 20"><rect x="4" y="4" width="12" height="12" rx="1" fill="#c4ccd8"/><rect x="6.500" y="4.500" width="7" height="4.500" fill="#eef0f4"/><rect x="7" y="11.500" width="6" height="4" fill="#e4e8ee"/></svg>
<div style="left:27px;top:822.8px;width:90px;height:7px;background:#fff;border:1px solid #6e6e6e;border-radius:3.500px;"></div>
<svg style="left:64.5px;top:817.8px;" width="13" height="18" viewBox="0 0 13 18"><path d="M6.500 0.500L12.300 9 6.500 17.500 0.700 9z" fill="#dbe8f8" stroke="#7a9cc8" stroke-width="1"/><path d="M1.800 9h9.400" stroke="#c4d8f0" stroke-width="1"/></svg>
<div style="left:239px;top:84px;width:188px;height:24px;background:#ebebeb;border:1px solid #bebebe;"></div>
<svg style="left:229px;top:91px;" width="10" height="10" viewBox="0 0 10 10"><path d="M8.500 1V8.500H1z" fill="#c8c8c8" stroke="#707070" stroke-width="1.100" stroke-linejoin="miter"/></svg>
<div style="left:243px;top:90px;width:14px;height:12px;background:#f6f6f6;border:1px solid #b4b4b4;border-radius:2px;"></div>
<svg style="left:246px;top:94px;" width="8" height="5" viewBox="0 0 8 5"><path d="M0 0h8L4 4.500z" fill="#cc0000"/></svg>
<div style="top:85.5px;height:22px;line-height:22px;font-size:15.5px;white-space:pre;font-weight:bold;left:259px;">Local Data Filter</div>
<div style="left:241px;top:114px;width:60px;height:21px;background:#dcdcdc;border:1px solid #7a7a7a;"></div>
<div style="top:116.8px;height:18px;line-height:18px;font-size:12.7px;white-space:pre;left:241.0px;width:60px;text-align:center;">Clear</div>
<div style="left:306px;top:114px;width:70px;height:21px;background:#dcdcdc;border:1px solid #7a7a7a;"></div>
<div style="top:116.8px;height:18px;line-height:18px;font-size:12.7px;white-space:pre;left:309px;">Favorites</div>
<svg style="left:364.5px;top:122px;" width="8" height="5" viewBox="0 0 8 5"><path d="M0 0h8L4 4.200z" fill="#000"/></svg>
<div style="left:241px;top:165px;width:14px;height:13px;background:#e6e6e6;border:1px solid #bcbcbc;"></div>
<div style="top:163.0px;height:18px;line-height:18px;font-size:12.7px;white-space:pre;color:#6d6d6d;left:260px;">Inverse</div>
<div style="left:239px;top:182px;width:188px;height:413px;border:1px solid #d9d9d9;"></div>
<div style="left:250px;top:191px;width:14px;height:12px;background:#f6f6f6;border:1px solid #b4b4b4;border-radius:2px;"></div>
<svg style="left:253px;top:195px;" width="8" height="5" viewBox="0 0 8 5"><path d="M0 0h8L4 4.500z" fill="#cc0000"/></svg>
<div style="top:186.8px;height:18px;line-height:18px;font-size:12.9px;white-space:pre;font-weight:bold;left:252.0px;width:160px;text-align:center;">WAFER_ID (23)</div>
<svg style="left:403.5px;top:191.5px;" width="9" height="9" viewBox="0 0 9 9"><path d="M1 1l7 7M8 1l-7 7" stroke="#9a9a9a" stroke-width="2.100"/></svg>
<div style="left:243px;top:209px;width:179px;height:23px;background:#fff;border:1px solid #8cc8f0;"></div>
<div style="left:407px;top:210px;width:1px;height:21px;background:#8cc8f0;"></div>
<svg style="left:390px;top:213px;" width="13" height="14" viewBox="0 0 13 14"><circle cx="8.400" cy="5" r="2.900" fill="none" stroke="#6a6a6a" stroke-width="1.700"/><path d="M6.300 7.300L2 11.600" stroke="#6a6a6a" stroke-width="2.300" stroke-linecap="round"/></svg>
<svg style="left:410.5px;top:218.5px;" width="8" height="5" viewBox="0 0 8 5"><path d="M0 0h8L4 4.200z" fill="#000"/></svg>
<div style="left:244px;top:233px;width:133px;height:16.6px;background:#d5dbe3;"></div>
<div style="top:233.0px;height:18px;line-height:18px;font-size:12.7px;white-space:pre;left:246.5px;">1</div>
<div style="top:233.5px;height:18px;line-height:18px;font-size:12.7px;white-space:pre;left:380px;">466</div>
<div style="left:244px;top:252px;width:133px;height:16.6px;background:#d5dbe3;"></div>
<div style="top:252.0px;height:18px;line-height:18px;font-size:12.7px;white-space:pre;left:246.5px;">2</div>
<div style="top:252.5px;height:18px;line-height:18px;font-size:12.7px;white-space:pre;left:380px;">466</div>
<div style="left:244px;top:271px;width:133px;height:16.6px;background:#d5dbe3;"></div>
<div style="top:271.0px;height:18px;line-height:18px;font-size:12.7px;white-space:pre;left:246.5px;">3</div>
<div style="top:271.5px;height:18px;line-height:18px;font-size:12.7px;white-space:pre;left:380px;">466</div>
<div style="left:244px;top:290px;width:133px;height:16.6px;background:#d5dbe3;"></div>
<div style="top:290.0px;height:18px;line-height:18px;font-size:12.7px;white-space:pre;left:246.5px;">4</div>
<div style="top:290.5px;height:18px;line-height:18px;font-size:12.7px;white-space:pre;left:380px;">466</div>
<div style="left:244px;top:309px;width:133px;height:16.6px;background:#d5dbe3;"></div>
<div style="top:309.0px;height:18px;line-height:18px;font-size:12.7px;white-space:pre;left:246.5px;">5</div>
<div style="top:309.5px;height:18px;line-height:18px;font-size:12.7px;white-space:pre;left:380px;">466</div>
<div style="left:244px;top:328px;width:133px;height:16.6px;background:#d5dbe3;"></div>
<div style="top:328.0px;height:18px;line-height:18px;font-size:12.7px;white-space:pre;left:246.5px;">6</div>
<div style="top:328.5px;height:18px;line-height:18px;font-size:12.7px;white-space:pre;left:380px;">466</div>
<div style="left:244px;top:347px;width:133px;height:16.6px;background:#d5dbe3;"></div>
<div style="top:347.0px;height:18px;line-height:18px;font-size:12.7px;white-space:pre;left:246.5px;">7</div>
<div style="top:347.5px;height:18px;line-height:18px;font-size:12.7px;white-space:pre;left:380px;">466</div>
<div style="left:244px;top:366px;width:133px;height:16.6px;background:#d5dbe3;"></div>
<div style="top:366.0px;height:18px;line-height:18px;font-size:12.7px;white-space:pre;left:246.5px;">8</div>
<div style="top:366.5px;height:18px;line-height:18px;font-size:12.7px;white-space:pre;left:380px;">466</div>
<div style="left:244px;top:385px;width:133px;height:16.6px;background:#d5dbe3;"></div>
<div style="top:385.0px;height:18px;line-height:18px;font-size:12.7px;white-space:pre;left:246.5px;">9</div>
<div style="top:385.5px;height:18px;line-height:18px;font-size:12.7px;white-space:pre;left:380px;">466</div>
<div style="left:244px;top:404px;width:133px;height:16.6px;background:#d5dbe3;"></div>
<div style="top:404.0px;height:18px;line-height:18px;font-size:12.7px;white-space:pre;left:246.5px;">10</div>
<div style="top:404.5px;height:18px;line-height:18px;font-size:12.7px;white-space:pre;left:380px;">466</div>
<div style="left:244px;top:423px;width:133px;height:16.6px;background:#d5dbe3;"></div>
<div style="top:423.0px;height:18px;line-height:18px;font-size:12.7px;white-space:pre;left:246.5px;">11</div>
<div style="top:423.5px;height:18px;line-height:18px;font-size:12.7px;white-space:pre;left:380px;">466</div>
<div style="left:244px;top:442px;width:133px;height:16.6px;background:#d5dbe3;"></div>
<div style="top:442.0px;height:18px;line-height:18px;font-size:12.7px;white-space:pre;left:246.5px;">12</div>
<div style="top:442.5px;height:18px;line-height:18px;font-size:12.7px;white-space:pre;left:380px;">466</div>
<div style="left:244px;top:461px;width:133px;height:16.6px;background:#d5dbe3;"></div>
<div style="top:461.0px;height:18px;line-height:18px;font-size:12.7px;white-space:pre;left:246.5px;">13</div>
<div style="top:461.5px;height:18px;line-height:18px;font-size:12.7px;white-space:pre;left:380px;">466</div>
<div style="left:244px;top:480px;width:133px;height:16.6px;background:#d5dbe3;"></div>
<div style="top:480.0px;height:18px;line-height:18px;font-size:12.7px;white-space:pre;left:246.5px;">14</div>
<div style="top:480.5px;height:18px;line-height:18px;font-size:12.7px;white-space:pre;left:380px;">466</div>
<div style="left:244px;top:499px;width:133px;height:17.0px;background:#d5dbe3;"></div>
<div style="top:499.0px;height:18px;line-height:18px;font-size:12.7px;white-space:pre;left:246.5px;">16</div>
<div style="top:499.5px;height:18px;line-height:18px;font-size:12.7px;white-space:pre;left:380px;">466</div>
<div style="left:405px;top:232px;width:17px;height:285px;background:#f0f0f0;"></div>
<div style="left:405px;top:249px;width:17px;height:164px;background:#cdcdcd;"></div>
<svg style="left:405px;top:237px;" width="17" height="8" viewBox="0 0 17 8"><path d="M5.0 6l3.500-3.500 3.500 3.500" fill="none" stroke="#9a9a9a" stroke-width="1.200"/></svg>
<svg style="left:405px;top:504px;" width="17" height="8" viewBox="0 0 17 8"><path d="M5.0 2l3.500 3.500 3.500-3.500" fill="none" stroke="#6a6a6a" stroke-width="1.200"/></svg>
<div style="left:242px;top:520px;width:183px;height:1px;background:#d9d9d9;"></div>
<div style="left:250px;top:528px;width:14px;height:12px;background:#f6f6f6;border:1px solid #b4b4b4;border-radius:2px;"></div>
<svg style="left:253px;top:532px;" width="8" height="5" viewBox="0 0 8 5"><path d="M0 0h8L4 4.500z" fill="#cc0000"/></svg>
<div style="top:523.8px;height:18px;line-height:18px;font-size:12.9px;white-space:pre;font-weight:bold;left:252.0px;width:160px;text-align:center;">LOT_NO (1)</div>
<svg style="left:403.5px;top:528.5px;" width="9" height="9" viewBox="0 0 9 9"><path d="M1 1l7 7M8 1l-7 7" stroke="#9a9a9a" stroke-width="2.100"/></svg>
<div style="left:243px;top:546px;width:179px;height:23px;background:#fff;border:1px solid #8cc8f0;"></div>
<div style="left:407px;top:547px;width:1px;height:21px;background:#8cc8f0;"></div>
<svg style="left:390px;top:550px;" width="13" height="14" viewBox="0 0 13 14"><circle cx="8.400" cy="5" r="2.900" fill="none" stroke="#6a6a6a" stroke-width="1.700"/><path d="M6.300 7.300L2 11.600" stroke="#6a6a6a" stroke-width="2.300" stroke-linecap="round"/></svg>
<svg style="left:410.5px;top:555.5px;" width="8" height="5" viewBox="0 0 8 5"><path d="M0 0h8L4 4.200z" fill="#000"/></svg>
<div style="left:244px;top:570px;width:177px;height:14px;background:#d5dbe3;border:1px solid #9a9a9a;"></div>
<div style="top:571.3px;height:12px;line-height:12px;font-size:8.9px;white-space:pre;color:#222;left:272.5px;width:120px;text-align:center;">P0NA20.00</div>
<div style="left:240px;top:597px;width:60px;height:21px;background:#dcdcdc;border:1px solid #7a7a7a;"></div>
<div style="top:599.8px;height:18px;line-height:18px;font-size:12.7px;white-space:pre;left:240.0px;width:60px;text-align:center;">AND</div>
<div style="left:304px;top:597px;width:60px;height:21px;background:#dcdcdc;border:1px solid #7a7a7a;"></div>
<div style="top:599.8px;height:18px;line-height:18px;font-size:12.7px;white-space:pre;left:304.0px;width:60px;text-align:center;">OR</div>
<div style="left:443px;top:84px;width:1055px;height:24px;background:#ebebeb;border:1px solid #bebebe;"></div>
<svg style="left:433px;top:91px;" width="10" height="10" viewBox="0 0 10 10"><path d="M8.500 1V8.500H1z" fill="#c8c8c8" stroke="#707070" stroke-width="1.100" stroke-linejoin="miter"/></svg>
<div style="left:447px;top:90px;width:14px;height:12px;background:#f6f6f6;border:1px solid #b4b4b4;border-radius:2px;"></div>
<svg style="left:450px;top:94px;" width="8" height="5" viewBox="0 0 8 5"><path d="M0 0h8L4 4.500z" fill="#cc0000"/></svg>
<div style="top:85.5px;height:22px;line-height:22px;font-size:15.5px;white-space:pre;font-weight:bold;left:462.5px;">Graph Builder</div>
<div style="left:444px;top:111px;width:60px;height:21px;background:#f6f6f6;border:1px solid #bcbcbc;"></div>
<div style="top:113.8px;height:18px;line-height:18px;font-size:12.7px;white-space:pre;color:#9a9a9a;left:444.0px;width:60px;text-align:center;">Undo</div>
<div style="left:508px;top:111px;width:63px;height:21px;background:#dcdcdc;border:1px solid #7a7a7a;"></div>
<div style="top:113.8px;height:18px;line-height:18px;font-size:12.7px;white-space:pre;left:508.0px;width:63px;text-align:center;">Start Over</div>
<div style="left:575px;top:111px;width:60px;height:21px;background:#dcdcdc;border:1px solid #7a7a7a;"></div>
<div style="top:113.8px;height:18px;line-height:18px;font-size:12.7px;white-space:pre;left:575.0px;width:60px;text-align:center;">Done</div>
<div style="left:443px;top:138px;width:14px;height:12px;background:#f6f6f6;border:1px solid #b4b4b4;border-radius:2px;"></div>
<svg style="left:446px;top:142px;" width="8" height="5" viewBox="0 0 8 5"><path d="M0 0h8L4 4.500z" fill="#cc0000"/></svg>
<div style="top:137.0px;height:18px;line-height:18px;font-size:12.7px;white-space:pre;left:459px;">39 Columns</div>
<div style="left:442px;top:156px;width:272px;height:23px;background:#fff;border:1px solid #8cc8f0;"></div>
<div style="left:699px;top:157px;width:1px;height:21px;background:#8cc8f0;"></div>
<div style="top:159.7px;height:18px;line-height:18px;font-size:12.5px;white-space:pre;font-style:italic;color:#6a6a6a;left:447px;">Enter column name</div>
<svg style="left:682px;top:160px;" width="13" height="14" viewBox="0 0 13 14"><circle cx="8.400" cy="5" r="2.900" fill="none" stroke="#6a6a6a" stroke-width="1.700"/><path d="M6.300 7.300L2 11.600" stroke="#6a6a6a" stroke-width="2.300" stroke-linecap="round"/></svg>
<svg style="left:702.5px;top:165.5px;" width="8" height="5" viewBox="0 0 8 5"><path d="M0 0h8L4 4.200z" fill="#000"/></svg>
<div style="left:442px;top:179px;width:266px;height:194px;background:#fff;border:1px solid #9a9a9a;"></div>
<div style="left:689px;top:180px;width:17.5px;height:192px;background:#f0f0f0;"></div>
<div style="left:689px;top:198px;width:17.5px;height:40px;background:#cdcdcd;"></div>
<svg style="left:689px;top:185px;" width="17.5" height="8" viewBox="0 0 17.5 8"><path d="M5.25 6l3.500-3.500 3.500 3.500" fill="none" stroke="#9a9a9a" stroke-width="1.200"/></svg>
<svg style="left:689px;top:359px;" width="17.5" height="8" viewBox="0 0 17.5 8"><path d="M5.25 2l3.500 3.500 3.500-3.500" fill="none" stroke="#6a6a6a" stroke-width="1.200"/></svg>
<svg style="left:447px;top:185.5px;" width="12" height="10" viewBox="0 0 12 10"><rect x="0" y="6" width="3.500" height="4" fill="#58b048"/><rect x="4" y="3" width="3.500" height="7" fill="#58b048"/><rect x="8" y="0" width="3.500" height="10" fill="#58b048"/><rect x="0" y="9" width="11.500" height="1" fill="#3c8c30"/></svg>
<div style="top:181.5px;height:18px;line-height:18px;font-size:12.7px;white-space:pre;letter-spacing:-0.95px;left:464px;">WAFER_ID</div>
<svg style="left:447px;top:204.5px;" width="12" height="10" viewBox="0 0 12 10"><rect x="0" y="2" width="3.300" height="8" fill="#d42a18"/><rect x="4" y="0" width="3.300" height="10" fill="#d42a18"/><rect x="8" y="5" width="3.300" height="5" fill="#d42a18"/><rect x="0" y="9" width="11.500" height="1" fill="#a41c10"/></svg>
<div style="top:200.5px;height:18px;line-height:18px;font-size:12.7px;white-space:pre;letter-spacing:-0.55px;left:464px;">LOT_NO</div>
<svg style="left:446.5px;top:222.5px;" width="13" height="12" viewBox="0 0 13 12"><path d="M12 0.300V11H0.300z" fill="#2d5fb4"/><path d="M0.300 11L12 0.300" stroke="#5c8cd8" stroke-width="0.900"/><path d="M0.300 11.200H12.200" stroke="#5c6478" stroke-width="1"/></svg>
<div style="top:219.5px;height:18px;line-height:18px;font-size:12.7px;white-space:pre;letter-spacing:-1.2px;left:464px;">Y_AXIS</div>
<svg style="left:446.5px;top:241.5px;" width="13" height="12" viewBox="0 0 13 12"><path d="M12 0.300V11H0.300z" fill="#2d5fb4"/><path d="M0.300 11L12 0.300" stroke="#5c8cd8" stroke-width="0.900"/><path d="M0.300 11.200H12.200" stroke="#5c6478" stroke-width="1"/></svg>
<div style="top:238.5px;height:18px;line-height:18px;font-size:12.7px;white-space:pre;left:464px;">X</div>
<svg style="left:446.5px;top:260.5px;" width="13" height="12" viewBox="0 0 13 12"><path d="M12 0.300V11H0.300z" fill="#2d5fb4"/><path d="M0.300 11L12 0.300" stroke="#5c8cd8" stroke-width="0.900"/><path d="M0.300 11.200H12.200" stroke="#5c6478" stroke-width="1"/></svg>
<div style="top:257.5px;height:18px;line-height:18px;font-size:12.7px;white-space:pre;left:464px;">Missing(Bin)</div>
<svg style="left:446.5px;top:279.5px;" width="13" height="12" viewBox="0 0 13 12"><path d="M12 0.300V11H0.300z" fill="#2d5fb4"/><path d="M0.300 11L12 0.300" stroke="#5c8cd8" stroke-width="0.900"/><path d="M0.300 11.200H12.200" stroke="#5c6478" stroke-width="1"/></svg>
<div style="top:276.5px;height:18px;line-height:18px;font-size:12.7px;white-space:pre;left:464px;">1</div>
<svg style="left:446.5px;top:298.5px;" width="13" height="12" viewBox="0 0 13 12"><path d="M12 0.300V11H0.300z" fill="#2d5fb4"/><path d="M0.300 11L12 0.300" stroke="#5c8cd8" stroke-width="0.900"/><path d="M0.300 11.200H12.200" stroke="#5c6478" stroke-width="1"/></svg>
<div style="top:295.5px;height:18px;line-height:18px;font-size:12.7px;white-space:pre;left:464px;">10</div>
<svg style="left:446.5px;top:317.5px;" width="13" height="12" viewBox="0 0 13 12"><path d="M12 0.300V11H0.300z" fill="#2d5fb4"/><path d="M0.300 11L12 0.300" stroke="#5c8cd8" stroke-width="0.900"/><path d="M0.300 11.200H12.200" stroke="#5c6478" stroke-width="1"/></svg>
<div style="top:314.5px;height:18px;line-height:18px;font-size:12.7px;white-space:pre;left:464px;">11</div>
<svg style="left:446.5px;top:336.5px;" width="13" height="12" viewBox="0 0 13 12"><path d="M12 0.300V11H0.300z" fill="#2d5fb4"/><path d="M0.300 11L12 0.300" stroke="#5c8cd8" stroke-width="0.900"/><path d="M0.300 11.200H12.200" stroke="#5c6478" stroke-width="1"/></svg>
<div style="top:333.5px;height:18px;line-height:18px;font-size:12.7px;white-space:pre;left:464px;">12</div>
<svg style="left:446.5px;top:355.5px;" width="13" height="12" viewBox="0 0 13 12"><path d="M12 0.300V11H0.300z" fill="#2d5fb4"/><path d="M0.300 11L12 0.300" stroke="#5c8cd8" stroke-width="0.900"/><path d="M0.300 11.200H12.200" stroke="#5c6478" stroke-width="1"/></svg>
<div style="top:352.5px;height:18px;line-height:18px;font-size:12.7px;white-space:pre;left:464px;">16</div>
<div style="left:455px;top:380px;width:230px;height:21px;background:#ebebeb;border:1px solid #bebebe;"></div>
<svg style="left:445px;top:385.5px;" width="10" height="10" viewBox="0 0 10 10"><path d="M8.500 1V8.500H1z" fill="#c8c8c8" stroke="#707070" stroke-width="1.100" stroke-linejoin="miter"/></svg>
<div style="top:381.8px;height:18px;line-height:18px;font-size:13.2px;white-space:pre;font-weight:bold;left:458.5px;">Heatmap</div>
<div style="top:408.0px;height:16px;line-height:16px;font-size:11.4px;white-space:pre;left:449px;">Bin Shape</div>
<div style="left:561px;top:406px;width:121px;height:21px;background:#e9e9e9;border:1px solid #a8a8a8;background:linear-gradient(#f2f2f2,#e4e4e4);"></div>
<div style="top:409.0px;height:16px;line-height:16px;font-size:11.5px;white-space:pre;left:567px;">Rectangular</div>
<svg style="left:669px;top:412.5px;" width="7" height="6" viewBox="0 0 7 6"><path d="M0.600 0.800l2.800 2.800 2.800-2.800" fill="none" stroke="#444" stroke-width="1.100"/></svg>
<div style="top:434.0px;height:16px;line-height:16px;font-size:11.4px;white-space:pre;left:449px;">Label</div>
<div style="left:561px;top:432px;width:121px;height:21px;background:#e9e9e9;border:1px solid #a8a8a8;background:linear-gradient(#f2f2f2,#e4e4e4);"></div>
<div style="top:435.0px;height:16px;line-height:16px;font-size:11.5px;white-space:pre;left:567px;">Label by Value</div>
<svg style="left:669px;top:438.5px;" width="7" height="6" viewBox="0 0 7 6"><path d="M0.600 0.800l2.800 2.800 2.800-2.800" fill="none" stroke="#444" stroke-width="1.100"/></svg>
<div style="top:457.0px;height:16px;line-height:16px;font-size:11.4px;white-space:pre;left:449px;">Max Label Size</div>
<div style="left:563px;top:462.0px;width:112px;height:7px;background:#fff;border:1px solid #6e6e6e;border-radius:3.500px;"></div>
<svg style="left:562.5px;top:457.0px;" width="13" height="18" viewBox="0 0 13 18"><path d="M6.500 0.500L12.300 9 6.500 17.500 0.700 9z" fill="#dbe8f8" stroke="#7a9cc8" stroke-width="1"/><path d="M1.800 9h9.400" stroke="#c4d8f0" stroke-width="1"/></svg>
<div style="top:478.0px;height:16px;line-height:16px;font-size:11.4px;white-space:pre;left:449px;">Label Format</div>
<div style="left:560px;top:477px;width:122.5px;height:18.8px;background:#e1e1e1;border:1px solid #7a7a7a;"></div>
<div style="top:478.3px;height:17px;line-height:17px;font-size:12px;white-space:pre;left:585.0px;width:60px;text-align:center;">Auto</div>
<svg style="left:633px;top:485px;" width="8" height="5" viewBox="0 0 8 5"><path d="M0 0h8L4 4.200z" fill="#000"/></svg>
<div style="top:498.0px;height:16px;line-height:16px;font-size:11.4px;white-space:pre;left:449px;">Variables</div>
<svg style="left:563px;top:499px;" width="9" height="13" viewBox="0 0 9 13"><path d="M1 0.800L7.600 6.300 1 11.800z" fill="#f4f4f4" stroke="#757575" stroke-width="1.100"/></svg>
<svg style="left:719px;top:111px;" width="26" height="26" viewBox="0 0 26 26"><path d="M0.500 0V25.500H26" fill="none" stroke="#606060" stroke-width="1"/><rect x="13.0" y="0.7" width="2.800" height="2.800" fill="#1c50b8"/><rect x="7.9" y="5.9" width="2.800" height="2.800" fill="#1c50b8"/><rect x="22.0" y="7.9" width="2.800" height="2.800" fill="#1c50b8"/><rect x="15.9" y="10.8" width="2.800" height="2.800" fill="#1c50b8"/><rect x="3.9" y="12.7" width="2.800" height="2.800" fill="#1c50b8"/><rect x="21.0" y="15.7" width="2.800" height="2.800" fill="#1c50b8"/><rect x="10.0" y="17.8" width="2.800" height="2.800" fill="#1c50b8"/><rect x="14.8" y="20.8" width="2.800" height="2.800" fill="#1c50b8"/></svg>
<svg style="left:749px;top:111px;" width="26" height="26" viewBox="0 0 26 26"><path d="M0.500 0V25.500H26" fill="none" stroke="#606060" stroke-width="1"/><rect x="5.9" y="2.8" width="2.800" height="2.800" fill="#8cb0e8"/><rect x="13.9" y="0.7" width="2.800" height="2.800" fill="#8cb0e8"/><rect x="16.7" y="6.6" width="2.800" height="2.800" fill="#8cb0e8"/><rect x="20.8" y="8.7" width="2.800" height="2.800" fill="#8cb0e8"/><rect x="1.8" y="14.8" width="2.800" height="2.800" fill="#8cb0e8"/><rect x="7.9" y="13.7" width="2.800" height="2.800" fill="#8cb0e8"/><rect x="15.9" y="17.8" width="2.800" height="2.800" fill="#8cb0e8"/><rect x="8.9" y="20.8" width="2.800" height="2.800" fill="#8cb0e8"/><path d="M1.100 13C3 10 6.500 9.200 10 11.200S17 15.600 20.500 14.800 25.600 12.800 25.600 12.800" fill="none" stroke="#1c3c9c" stroke-width="1.300"/></svg>
<svg style="left:779px;top:111px;" width="26" height="26" viewBox="0 0 26 26"><path d="M0.500 0V25.500H26" fill="none" stroke="#606060" stroke-width="1"/><rect x="13.9" y="0.7" width="2.800" height="2.800" fill="#8cb0e8"/><rect x="9.8" y="4.8" width="2.800" height="2.800" fill="#8cb0e8"/><rect x="4.8" y="6.8" width="2.800" height="2.800" fill="#8cb0e8"/><rect x="1.8" y="11.8" width="2.800" height="2.800" fill="#8cb0e8"/><rect x="16.0" y="12.7" width="2.800" height="2.800" fill="#8cb0e8"/><rect x="20.8" y="10.8" width="2.800" height="2.800" fill="#8cb0e8"/><rect x="10.9" y="17.8" width="2.800" height="2.800" fill="#8cb0e8"/><rect x="6.9" y="20.8" width="2.800" height="2.800" fill="#8cb0e8"/><path d="M1.100 19.200L24.300 7.100" stroke="#10309c" stroke-width="1.700"/></svg>
<svg style="left:809px;top:111px;" width="26" height="26" viewBox="0 0 26 26"><path d="M0.500 0V25.500H26" fill="none" stroke="#606060" stroke-width="1"/><rect x="11.8" y="-0.3" width="2.800" height="2.800" fill="#8cb0e8"/><rect x="2.8" y="3.7" width="2.800" height="2.800" fill="#8cb0e8"/><rect x="6.8" y="4.8" width="2.800" height="2.800" fill="#8cb0e8"/><rect x="2.8" y="20.8" width="2.800" height="2.800" fill="#8cb0e8"/><rect x="17.8" y="21.7" width="2.800" height="2.800" fill="#8cb0e8"/><rect x="13.7" y="19.8" width="2.800" height="2.800" fill="#8cb0e8"/><rect x="19.9" y="14.8" width="2.800" height="2.800" fill="#8cb0e8"/><ellipse cx="14.100" cy="12.500" rx="13.400" ry="6.500" transform="rotate(-30 14.100 12.500)" fill="#b4c6ee" stroke="#2a64d4" stroke-width="1.300"/><rect x="20.9" y="6.6" width="2.800" height="2.800" fill="#8caae4"/><rect x="14.8" y="9.8" width="2.800" height="2.800" fill="#8caae4"/><rect x="2.8" y="11.8" width="2.800" height="2.800" fill="#8caae4"/><rect x="8.7" y="16.7" width="2.800" height="2.800" fill="#8caae4"/></svg>
<svg style="left:839px;top:111px;" width="26" height="26" viewBox="0 0 26 26"><rect x="0.500" y="0.500" width="25" height="25" fill="#86a8ea" stroke="#707070"/><path d="M10 1c1 3 1.500 5 -1.500 8.500C5 13 3.500 16 5.500 19.500c2 3.500 7 4 10.500 2.500s5.500-5 4.500-8.500c-0.500-2-0.500-3 1-5.500L23.500 1z" fill="#4a7cd4"/><path d="M15 1h5.500l-4.500 9.500c1.500 1.500 2 3.500 1 5.500-1.300 2.600-4.800 3.600-7.600 2.300-2.600-1.200-3.500-4-2.400-6.300 1-2 3-3 5-3z" fill="#1c3c8c"/></svg>
<svg style="left:876px;top:111px;" width="26" height="26" viewBox="0 0 26 26"><path d="M0.500 0V25.500H26" fill="none" stroke="#606060" stroke-width="1"/><path d="M2.500 19.200L9.400 12.500 13.700 16.700 25.600 3.900" fill="none" stroke="#10309c" stroke-width="2"/></svg>
<svg style="left:906px;top:111px;" width="26" height="26" viewBox="0 0 26 26"><path d="M0.500 0V25.500H26" fill="none" stroke="#606060" stroke-width="1"/><rect x="3.3" y="5" width="5.000000000000001" height="20" fill="#a4c4f8" stroke="#2a64d4" stroke-width="1"/><rect x="10.4" y="9.3" width="5.0" height="15.7" fill="#a4c4f8" stroke="#2a64d4" stroke-width="1"/><rect x="17.6" y="0.5" width="5.0" height="24.5" fill="#a4c4f8" stroke="#2a64d4" stroke-width="1"/></svg>
<svg style="left:936px;top:111px;" width="26" height="26" viewBox="0 0 26 26"><path d="M0.500 0V25.500H26" fill="none" stroke="#606060" stroke-width="1"/><path d="M0.900 2.900L7.500 7.100 9.600 6.100 12.300 8.700 17.100 4.700 23.500 10.900V25H0.900z" fill="#6a9ce0" stroke="#3a78d0" stroke-width="0.600"/><path d="M0.900 16.200L3.700 15.100 6.900 16.700 10.500 12.800 14.400 17.800 19.200 16.700 23.500 19.400V25H0.900z" fill="#0c2c8c"/></svg>
<svg style="left:966px;top:111px;" width="26" height="26" viewBox="0 0 26 26"><path d="M0.500 0V25.500H26" fill="none" stroke="#606060" stroke-width="1"/><path d="M6.25 5V21.3M4.75 5h3M4.75 21.3h3" stroke="#2a64d4" stroke-width="1"/><rect x="4.2" y="8.2" width="4.1" height="10.1" fill="#cfe0fc" stroke="#2a64d4" stroke-width="1"/><path d="M4.2 13.5H8.3" stroke="#2a64d4" stroke-width="1"/><path d="M13.3 1.1V23.1M11.8 1.1h3M11.8 23.1h3" stroke="#2a64d4" stroke-width="1"/><rect x="11.2" y="3.9" width="4.2" height="16.0" fill="#cfe0fc" stroke="#2a64d4" stroke-width="1"/><path d="M11.2 12.5H15.4" stroke="#2a64d4" stroke-width="1"/><path d="M20.15 3.2V17.1M18.65 3.2h3M18.65 17.1h3" stroke="#2a64d4" stroke-width="1"/><rect x="18" y="6.1" width="4.3" height="8.2" fill="#cfe0fc" stroke="#2a64d4" stroke-width="1"/><path d="M18 9.5H22.3" stroke="#2a64d4" stroke-width="1"/></svg>
<svg style="left:996px;top:111px;" width="26" height="26" viewBox="0 0 26 26"><path d="M0.500 0V25.500H26" fill="none" stroke="#606060" stroke-width="1"/><rect x="0.800" y="3.3" width="9.6" height="3.8" fill="#8cb4f4" stroke="#2a64d4" stroke-width="1"/><rect x="0.800" y="7.1" width="15" height="3.9" fill="#8cb4f4" stroke="#2a64d4" stroke-width="1"/><rect x="0.800" y="11" width="20.8" height="4.1" fill="#8cb4f4" stroke="#2a64d4" stroke-width="1"/><rect x="0.800" y="15.1" width="11.8" height="4.1" fill="#8cb4f4" stroke="#2a64d4" stroke-width="1"/><rect x="0.800" y="19.2" width="8.8" height="3.9" fill="#8cb4f4" stroke="#2a64d4" stroke-width="1"/></svg>
<div style="left:1031px;top:109px;width:30px;height:30px;background:#1a74d8;"></div>
<svg style="left:1033px;top:111px;" width="26" height="26" viewBox="0 0 26 26"><rect x="0.500" y="0.500" width="25" height="25" fill="#5880cc" stroke="#8a8a8a"/><rect x="1" y="1" width="6" height="12" fill="#7c9cdc"/><rect x="7" y="1" width="6" height="12" fill="#2458c0"/><rect x="13" y="1" width="6" height="12" fill="#6488d0"/><rect x="19" y="1" width="6" height="12" fill="#4870c4"/><rect x="1" y="13" width="6" height="12" fill="#2458c0"/><rect x="7" y="13" width="6" height="12" fill="#5c84cc"/><rect x="13" y="13" width="6" height="12" fill="#2450b4"/><rect x="19" y="13" width="6" height="12" fill="#7c9cdc"/></svg>
<svg style="left:1063px;top:111px;" width="26" height="26" viewBox="0 0 26 26"><circle cx="13" cy="13" r="12.800" fill="#3a78d8"/><path d="M13 13L4.300 3.700A12.800 12.800 0 0 1 24.300 7z" fill="#2458c0"/><path d="M13 13L24.300 7A12.800 12.800 0 0 1 22.800 21.200z" fill="#5c9ce4"/><path d="M13 13L22.800 21.200A12.800 12.800 0 0 1 13.500 25.800z" fill="#98b8f4"/></svg>
<svg style="left:1094px;top:112px;" width="24" height="24" viewBox="0 0 24 24"><rect x="0" y="0" width="24" height="24" fill="#707070"/><rect x="0.800" y="0.800" width="12" height="10" fill="#8cb0f0"/><rect x="13.800" y="0.800" width="9.400" height="10" fill="#3a78d8"/><rect x="0.800" y="11.800" width="6" height="7.800" fill="#b0ccfc"/><rect x="0.800" y="20.600" width="6" height="2.600" fill="#2a70e0"/><rect x="7.800" y="11.800" width="8.200" height="11.400" fill="#70a0f8"/><rect x="17" y="11.800" width="6.200" height="11.400" fill="#b0ccfc"/></svg>
<svg style="left:1123px;top:111.5px;" width="25" height="25.5" viewBox="0 0 25 25.5"><rect x="0" y="0" width="25" height="25.500" fill="#9a9a9a"/><rect x="0.6" y="0.600" width="7.5" height="7.7" fill="#4a84dc"/><rect x="0.6" y="8.3" width="7.5" height="5.9" fill="#0c2c9c"/><rect x="0.6" y="14.2" width="7.5" height="10.7" fill="#a4c0f8"/><rect x="8.8" y="0.600" width="7.3" height="6.6" fill="#4a84dc"/><rect x="8.8" y="7.2" width="7.3" height="4.1" fill="#0c2c9c"/><rect x="8.8" y="11.3" width="7.3" height="13.6" fill="#a4c0f8"/><rect x="16.9" y="0.600" width="7.5" height="10.7" fill="#4a84dc"/><rect x="16.9" y="11.3" width="7.5" height="5.0" fill="#0c2c9c"/><rect x="16.9" y="16.3" width="7.5" height="8.6" fill="#a4c0f8"/></svg>
<svg style="left:1160px;top:111px;" width="27" height="26" viewBox="0 0 27 26"><path d="M0.500 0V25.500H26" fill="none" stroke="#606060" stroke-width="1"/><rect x="11.500" y="0.500" width="14.500" height="10.500" fill="#fff" stroke="#1c3cb0" stroke-width="1"/><path d="M14 4h3.500M20 4h3.500M14 7.500h3.500M20 7.500h3.500" stroke="#1c3cb0" stroke-width="1.200"/><path d="M18.700 2.500v7" stroke="#1c3cb0" stroke-width="1" stroke-dasharray="1 1"/></svg>
<div style="left:1188px;top:109px;width:90px;height:30px;background:#e7e7e7;"></div>
<svg style="left:1190px;top:111px;" width="26" height="26" viewBox="0 0 26 26"><path d="M0.500 0V25.500H26" fill="none" stroke="#c4c4c4" stroke-width="1"/><text x="8" y="14" font-size="17" font-style="italic" font-weight="bold" fill="#e0d2a4" text-anchor="middle" style="font-family:'Liberation Serif',serif">f</text><text x="17.500" y="13" font-size="13" fill="#e0d2a4" text-anchor="middle" style="font-family:'Liberation Serif',serif">(•)</text><path d="M1 20C4 15.500 8 15.500 12.500 18.500S21 21.500 25.500 18.500" fill="none" stroke="#a4b8dc" stroke-width="1.300"/></svg>
<svg style="left:1220px;top:111px;" width="26" height="26" viewBox="0 0 26 26"><path d="M1 6.500h2V1h8.500l2.500 8.500L3 17.500H1z" fill="#c4d0e8" stroke="#bcbcbc" stroke-width="0.800"/><path d="M11.500 0.500H25.500v11.500h-1.500L14 9.500z" fill="#a4b0d0" stroke="#bcbcbc" stroke-width="0.800"/><path d="M3 17.500L14 9.500l10 2.500v5.500l-5 4.500v3.500H3z" fill="#b0c0dc" stroke="#bcbcbc" stroke-width="0.800"/></svg>
<svg style="left:1250px;top:111px;" width="26" height="26" viewBox="0 0 26 26"><rect x="0.500" y="0.500" width="25" height="25" fill="#e9e9e9" stroke="#c0c0c0"/><path d="M13.500 0.500v25" stroke="#c0c0c0" stroke-width="1"/><path d="M1 2.500L13.500 10.500 25 2.500M1 16.500L13.500 12 25 7.500M1 23.500L13.500 19.500 25 25" fill="none" stroke="#b0c4e4" stroke-width="1.300"/></svg>
<div style="top:143.5px;height:20px;line-height:20px;font-size:14.6px;white-space:pre;font-weight:bold;left:955.0px;width:200px;text-align:center;">Y_AXIS vs. X</div>
<div style="left:767px;top:167px;width:585px;height:23px;background:#dddcce;"></div>
<div style="left:767px;top:190px;width:585px;height:21.2px;background:#eae9e2;"></div>
<div style="top:170.7px;height:17px;line-height:17px;font-size:12.4px;white-space:pre;font-weight:bold;left:999.5px;width:120px;text-align:center;">LOT_NO</div>
<div style="top:193.2px;height:17px;line-height:17px;font-size:12.2px;white-space:pre;left:999.5px;width:120px;text-align:center;">P0NA20.00</div>
<svg style="left:0;top:0;" width="1500" height="879" viewBox="0 0 1500 879"><rect x="767" y="211" width="586" height="594" fill="#c0c0c0"/><path d="M790.5 211V804M812.5 211V804M835.5 211V804M857.5 211V804M880.5 211V804M902.5 211V804M925.5 211V804M947.5 211V804M970.5 211V804M992.5 211V804M1015.5 211V804M1037.5 211V804M1060.5 211V804M1082.5 211V804M1105.5 211V804M1127.5 211V804M1150.5 211V804M1172.5 211V804M1195.5 211V804M1217.5 211V804M1240.5 211V804M1262.5 211V804M1285.5 211V804M1307.5 211V804M1330.5 211V804M767.5 237.5H1352.5M767.5 263.5H1352.5M767.5 288.5H1352.5M767.5 314.5H1352.5M767.5 340.5H1352.5M767.5 366.5H1352.5M767.5 391.5H1352.5M767.5 417.5H1352.5M767.5 443.5H1352.5M767.5 469.5H1352.5M767.5 495.5H1352.5M767.5 520.5H1352.5M767.5 546.5H1352.5M767.5 572.5H1352.5M767.5 598.5H1352.5M767.5 624.5H1352.5M767.5 649.5H1352.5M767.5 675.5H1352.5M767.5 701.5H1352.5M767.5 727.5H1352.5M767.5 752.5H1352.5M767.5 778.5H1352.5" stroke="#dcdcdc" stroke-width="1" fill="none"/><g shape-rendering="crispEdges"><rect x="992" y="211" width="23" height="26" fill="#c0b16a"/><rect x="1015" y="211" width="22" height="26" fill="#666970"/><rect x="1037" y="211" width="23" height="26" fill="#5d616e"/><rect x="1060" y="211" width="22" height="26" fill="#707173"/><rect x="1082" y="211" width="23" height="26" fill="#848279"/><rect x="1105" y="211" width="22" height="26" fill="#c0b16a"/><rect x="925" y="237" width="22" height="26" fill="#5d616e"/><rect x="947" y="237" width="23" height="26" fill="#002a61"/><rect x="970" y="237" width="22" height="26" fill="#00224e"/><rect x="992" y="237" width="23" height="26" fill="#013271"/><rect x="1015" y="237" width="22" height="26" fill="#00224e"/><rect x="1037" y="237" width="23" height="26" fill="#00224e"/><rect x="1060" y="237" width="22" height="26" fill="#002a61"/><rect x="1082" y="237" width="23" height="26" fill="#002a61"/><rect x="1105" y="237" width="22" height="26" fill="#2e416d"/><rect x="1127" y="237" width="23" height="26" fill="#5d616e"/><rect x="1150" y="237" width="22" height="26" fill="#666970"/><rect x="1172" y="237" width="23" height="26" fill="#908b78"/><rect x="880" y="263" width="22" height="25" fill="#848279"/><rect x="902" y="263" width="23" height="25" fill="#1e3a6f"/><rect x="925" y="263" width="22" height="25" fill="#013271"/><rect x="947" y="263" width="23" height="25" fill="#002a61"/><rect x="970" y="263" width="22" height="25" fill="#00224e"/><rect x="992" y="263" width="23" height="25" fill="#00224e"/><rect x="1015" y="263" width="22" height="25" fill="#1e3a6f"/><rect x="1037" y="263" width="23" height="25" fill="#013271"/><rect x="1060" y="263" width="22" height="25" fill="#00224e"/><rect x="1082" y="263" width="23" height="25" fill="#2e416d"/><rect x="1105" y="263" width="22" height="25" fill="#002a61"/><rect x="1127" y="263" width="23" height="25" fill="#002a61"/><rect x="1150" y="263" width="22" height="25" fill="#00224e"/><rect x="1172" y="263" width="23" height="25" fill="#00224e"/><rect x="1195" y="263" width="22" height="25" fill="#013271"/><rect x="1217" y="263" width="23" height="25" fill="#848279"/><rect x="857" y="288" width="23" height="26" fill="#47516c"/><rect x="880" y="288" width="22" height="26" fill="#013271"/><rect x="902" y="288" width="23" height="26" fill="#00224e"/><rect x="925" y="288" width="22" height="26" fill="#002a61"/><rect x="947" y="288" width="23" height="26" fill="#013271"/><rect x="970" y="288" width="22" height="26" fill="#00224e"/><rect x="992" y="288" width="23" height="26" fill="#00224e"/><rect x="1015" y="288" width="22" height="26" fill="#013271"/><rect x="1037" y="288" width="23" height="26" fill="#013271"/><rect x="1060" y="288" width="22" height="26" fill="#2e416d"/><rect x="1082" y="288" width="23" height="26" fill="#00224e"/><rect x="1105" y="288" width="22" height="26" fill="#00224e"/><rect x="1127" y="288" width="23" height="26" fill="#002a61"/><rect x="1150" y="288" width="22" height="26" fill="#1e3a6f"/><rect x="1172" y="288" width="23" height="26" fill="#013271"/><rect x="1195" y="288" width="22" height="26" fill="#00224e"/><rect x="1217" y="288" width="23" height="26" fill="#707173"/><rect x="1240" y="288" width="22" height="26" fill="#002a61"/><rect x="835" y="314" width="22" height="26" fill="#52596d"/><rect x="857" y="314" width="23" height="26" fill="#2e416d"/><rect x="880" y="314" width="22" height="26" fill="#013271"/><rect x="902" y="314" width="23" height="26" fill="#3c4a6c"/><rect x="925" y="314" width="22" height="26" fill="#002a61"/><rect x="947" y="314" width="23" height="26" fill="#00224e"/><rect x="970" y="314" width="22" height="26" fill="#00224e"/><rect x="992" y="314" width="23" height="26" fill="#2e416d"/><rect x="1015" y="314" width="22" height="26" fill="#002a61"/><rect x="1037" y="314" width="23" height="26" fill="#47516c"/><rect x="1060" y="314" width="22" height="26" fill="#013271"/><rect x="1082" y="314" width="23" height="26" fill="#013271"/><rect x="1105" y="314" width="22" height="26" fill="#013271"/><rect x="1127" y="314" width="23" height="26" fill="#2e416d"/><rect x="1150" y="314" width="22" height="26" fill="#00224e"/><rect x="1172" y="314" width="23" height="26" fill="#1e3a6f"/><rect x="1195" y="314" width="22" height="26" fill="#013271"/><rect x="1217" y="314" width="23" height="26" fill="#7a7a78"/><rect x="1240" y="314" width="22" height="26" fill="#002a61"/><rect x="1262" y="314" width="23" height="26" fill="#e7d150"/><rect x="812" y="340" width="23" height="26" fill="#5d616e"/><rect x="835" y="340" width="22" height="26" fill="#00224e"/><rect x="857" y="340" width="23" height="26" fill="#1e3a6f"/><rect x="880" y="340" width="22" height="26" fill="#00224e"/><rect x="902" y="340" width="23" height="26" fill="#013271"/><rect x="925" y="340" width="22" height="26" fill="#002a61"/><rect x="947" y="340" width="23" height="26" fill="#013271"/><rect x="970" y="340" width="22" height="26" fill="#002a61"/><rect x="992" y="340" width="23" height="26" fill="#00224e"/><rect x="1015" y="340" width="22" height="26" fill="#002a61"/><rect x="1037" y="340" width="23" height="26" fill="#00224e"/><rect x="1060" y="340" width="22" height="26" fill="#00224e"/><rect x="1082" y="340" width="23" height="26" fill="#013271"/><rect x="1105" y="340" width="22" height="26" fill="#002a61"/><rect x="1127" y="340" width="23" height="26" fill="#1e3a6f"/><rect x="1150" y="340" width="22" height="26" fill="#013271"/><rect x="1172" y="340" width="23" height="26" fill="#2e416d"/><rect x="1195" y="340" width="22" height="26" fill="#3c4a6c"/><rect x="1217" y="340" width="23" height="26" fill="#013271"/><rect x="1240" y="340" width="22" height="26" fill="#00224e"/><rect x="1262" y="340" width="23" height="26" fill="#52596d"/><rect x="1285" y="340" width="22" height="26" fill="#3c4a6c"/><rect x="790" y="366" width="22" height="25" fill="#e7d150"/><rect x="812" y="366" width="23" height="25" fill="#52596d"/><rect x="835" y="366" width="22" height="25" fill="#00224e"/><rect x="857" y="366" width="23" height="25" fill="#002a61"/><rect x="880" y="366" width="22" height="25" fill="#002a61"/><rect x="902" y="366" width="23" height="25" fill="#1e3a6f"/><rect x="925" y="366" width="22" height="25" fill="#013271"/><rect x="947" y="366" width="23" height="25" fill="#1e3a6f"/><rect x="970" y="366" width="22" height="25" fill="#00224e"/><rect x="992" y="366" width="23" height="25" fill="#00224e"/><rect x="1015" y="366" width="22" height="25" fill="#002a61"/><rect x="1037" y="366" width="23" height="25" fill="#002a61"/><rect x="1060" y="366" width="22" height="25" fill="#00224e"/><rect x="1082" y="366" width="23" height="25" fill="#00224e"/><rect x="1105" y="366" width="22" height="25" fill="#002a61"/><rect x="1127" y="366" width="23" height="25" fill="#2e416d"/><rect x="1150" y="366" width="22" height="25" fill="#002a61"/><rect x="1172" y="366" width="23" height="25" fill="#002a61"/><rect x="1195" y="366" width="22" height="25" fill="#1e3a6f"/><rect x="1217" y="366" width="23" height="25" fill="#002a61"/><rect x="1240" y="366" width="22" height="25" fill="#00224e"/><rect x="1262" y="366" width="23" height="25" fill="#00224e"/><rect x="1285" y="366" width="22" height="25" fill="#2e416d"/><rect x="1307" y="366" width="23" height="25" fill="#848279"/><rect x="790" y="391" width="22" height="26" fill="#002a61"/><rect x="812" y="391" width="23" height="26" fill="#013271"/><rect x="835" y="391" width="22" height="26" fill="#00224e"/><rect x="857" y="391" width="23" height="26" fill="#013271"/><rect x="880" y="391" width="22" height="26" fill="#002a61"/><rect x="902" y="391" width="23" height="26" fill="#00224e"/><rect x="925" y="391" width="22" height="26" fill="#002a61"/><rect x="947" y="391" width="23" height="26" fill="#002a61"/><rect x="970" y="391" width="22" height="26" fill="#002a61"/><rect x="992" y="391" width="23" height="26" fill="#013271"/><rect x="1015" y="391" width="22" height="26" fill="#00224e"/><rect x="1037" y="391" width="23" height="26" fill="#002a61"/><rect x="1060" y="391" width="22" height="26" fill="#002a61"/><rect x="1082" y="391" width="23" height="26" fill="#00224e"/><rect x="1105" y="391" width="22" height="26" fill="#013271"/><rect x="1127" y="391" width="23" height="26" fill="#00224e"/><rect x="1150" y="391" width="22" height="26" fill="#013271"/><rect x="1172" y="391" width="23" height="26" fill="#00224e"/><rect x="1195" y="391" width="22" height="26" fill="#013271"/><rect x="1217" y="391" width="23" height="26" fill="#002a61"/><rect x="1240" y="391" width="22" height="26" fill="#00224e"/><rect x="1262" y="391" width="23" height="26" fill="#002a61"/><rect x="1285" y="391" width="22" height="26" fill="#1e3a6f"/><rect x="1307" y="391" width="23" height="26" fill="#47516c"/><rect x="767" y="417" width="23" height="26" fill="#fee838"/><rect x="790" y="417" width="22" height="26" fill="#013271"/><rect x="812" y="417" width="23" height="26" fill="#1e3a6f"/><rect x="835" y="417" width="22" height="26" fill="#00224e"/><rect x="857" y="417" width="23" height="26" fill="#002a61"/><rect x="880" y="417" width="22" height="26" fill="#5d616e"/><rect x="902" y="417" width="23" height="26" fill="#013271"/><rect x="925" y="417" width="22" height="26" fill="#002a61"/><rect x="947" y="417" width="23" height="26" fill="#002a61"/><rect x="970" y="417" width="22" height="26" fill="#00224e"/><rect x="992" y="417" width="23" height="26" fill="#013271"/><rect x="1015" y="417" width="22" height="26" fill="#002a61"/><rect x="1037" y="417" width="23" height="26" fill="#002a61"/><rect x="1060" y="417" width="22" height="26" fill="#00224e"/><rect x="1082" y="417" width="23" height="26" fill="#002a61"/><rect x="1105" y="417" width="22" height="26" fill="#002a61"/><rect x="1127" y="417" width="23" height="26" fill="#2e416d"/><rect x="1150" y="417" width="22" height="26" fill="#1e3a6f"/><rect x="1172" y="417" width="23" height="26" fill="#002a61"/><rect x="1195" y="417" width="22" height="26" fill="#013271"/><rect x="1217" y="417" width="23" height="26" fill="#00224e"/><rect x="1240" y="417" width="22" height="26" fill="#00224e"/><rect x="1262" y="417" width="23" height="26" fill="#013271"/><rect x="1285" y="417" width="22" height="26" fill="#00224e"/><rect x="1307" y="417" width="23" height="26" fill="#013271"/><rect x="1330" y="417" width="22" height="26" fill="#f5dc41"/><rect x="767" y="443" width="23" height="26" fill="#5d616e"/><rect x="790" y="443" width="22" height="26" fill="#1e3a6f"/><rect x="812" y="443" width="23" height="26" fill="#002a61"/><rect x="835" y="443" width="22" height="26" fill="#2e416d"/><rect x="857" y="443" width="23" height="26" fill="#1e3a6f"/><rect x="880" y="443" width="22" height="26" fill="#1e3a6f"/><rect x="902" y="443" width="23" height="26" fill="#00224e"/><rect x="925" y="443" width="22" height="26" fill="#013271"/><rect x="947" y="443" width="23" height="26" fill="#00224e"/><rect x="970" y="443" width="22" height="26" fill="#2e416d"/><rect x="992" y="443" width="23" height="26" fill="#002a61"/><rect x="1015" y="443" width="22" height="26" fill="#2e416d"/><rect x="1037" y="443" width="23" height="26" fill="#002a61"/><rect x="1060" y="443" width="22" height="26" fill="#013271"/><rect x="1082" y="443" width="23" height="26" fill="#013271"/><rect x="1105" y="443" width="22" height="26" fill="#002a61"/><rect x="1127" y="443" width="23" height="26" fill="#00224e"/><rect x="1150" y="443" width="22" height="26" fill="#013271"/><rect x="1172" y="443" width="23" height="26" fill="#1e3a6f"/><rect x="1195" y="443" width="22" height="26" fill="#002a61"/><rect x="1217" y="443" width="23" height="26" fill="#002a61"/><rect x="1240" y="443" width="22" height="26" fill="#002a61"/><rect x="1262" y="443" width="23" height="26" fill="#013271"/><rect x="1285" y="443" width="22" height="26" fill="#1e3a6f"/><rect x="1307" y="443" width="23" height="26" fill="#013271"/><rect x="1330" y="443" width="22" height="26" fill="#47516c"/><rect x="767" y="469" width="23" height="26" fill="#47516c"/><rect x="790" y="469" width="22" height="26" fill="#013271"/><rect x="812" y="469" width="23" height="26" fill="#1e3a6f"/><rect x="835" y="469" width="22" height="26" fill="#013271"/><rect x="857" y="469" width="23" height="26" fill="#00224e"/><rect x="880" y="469" width="22" height="26" fill="#002a61"/><rect x="902" y="469" width="23" height="26" fill="#002a61"/><rect x="925" y="469" width="22" height="26" fill="#00224e"/><rect x="947" y="469" width="23" height="26" fill="#013271"/><rect x="970" y="469" width="22" height="26" fill="#2e416d"/><rect x="992" y="469" width="23" height="26" fill="#00224e"/><rect x="1015" y="469" width="22" height="26" fill="#013271"/><rect x="1037" y="469" width="23" height="26" fill="#00224e"/><rect x="1060" y="469" width="22" height="26" fill="#013271"/><rect x="1082" y="469" width="23" height="26" fill="#013271"/><rect x="1105" y="469" width="22" height="26" fill="#00224e"/><rect x="1127" y="469" width="23" height="26" fill="#002a61"/><rect x="1150" y="469" width="22" height="26" fill="#013271"/><rect x="1172" y="469" width="23" height="26" fill="#002a61"/><rect x="1195" y="469" width="22" height="26" fill="#1e3a6f"/><rect x="1217" y="469" width="23" height="26" fill="#002a61"/><rect x="1240" y="469" width="22" height="26" fill="#00224e"/><rect x="1262" y="469" width="23" height="26" fill="#1e3a6f"/><rect x="1285" y="469" width="22" height="26" fill="#00224e"/><rect x="1307" y="469" width="23" height="26" fill="#00224e"/><rect x="1330" y="469" width="22" height="26" fill="#2e416d"/><rect x="767" y="495" width="23" height="25" fill="#3c4a6c"/><rect x="790" y="495" width="22" height="25" fill="#013271"/><rect x="812" y="495" width="23" height="25" fill="#013271"/><rect x="835" y="495" width="22" height="25" fill="#002a61"/><rect x="857" y="495" width="23" height="25" fill="#00224e"/><rect x="880" y="495" width="22" height="25" fill="#00224e"/><rect x="902" y="495" width="23" height="25" fill="#00224e"/><rect x="925" y="495" width="22" height="25" fill="#00224e"/><rect x="947" y="495" width="23" height="25" fill="#00224e"/><rect x="970" y="495" width="22" height="25" fill="#1e3a6f"/><rect x="992" y="495" width="23" height="25" fill="#00224e"/><rect x="1015" y="495" width="22" height="25" fill="#52596d"/><rect x="1037" y="495" width="23" height="25" fill="#5d616e"/><rect x="1060" y="495" width="22" height="25" fill="#666970"/><rect x="1082" y="495" width="23" height="25" fill="#1e3a6f"/><rect x="1105" y="495" width="22" height="25" fill="#2e416d"/><rect x="1127" y="495" width="23" height="25" fill="#00224e"/><rect x="1150" y="495" width="22" height="25" fill="#013271"/><rect x="1172" y="495" width="23" height="25" fill="#1e3a6f"/><rect x="1195" y="495" width="22" height="25" fill="#00224e"/><rect x="1217" y="495" width="23" height="25" fill="#00224e"/><rect x="1240" y="495" width="22" height="25" fill="#013271"/><rect x="1262" y="495" width="23" height="25" fill="#002a61"/><rect x="1285" y="495" width="22" height="25" fill="#013271"/><rect x="1307" y="495" width="23" height="25" fill="#00224e"/><rect x="1330" y="495" width="22" height="25" fill="#47516c"/><rect x="767" y="520" width="23" height="26" fill="#908b78"/><rect x="790" y="520" width="22" height="26" fill="#002a61"/><rect x="812" y="520" width="23" height="26" fill="#002a61"/><rect x="835" y="520" width="22" height="26" fill="#013271"/><rect x="857" y="520" width="23" height="26" fill="#3c4a6c"/><rect x="880" y="520" width="22" height="26" fill="#013271"/><rect x="902" y="520" width="23" height="26" fill="#002a61"/><rect x="925" y="520" width="22" height="26" fill="#00224e"/><rect x="947" y="520" width="23" height="26" fill="#00224e"/><rect x="970" y="520" width="22" height="26" fill="#002a61"/><rect x="992" y="520" width="23" height="26" fill="#00224e"/><rect x="1015" y="520" width="22" height="26" fill="#3c4a6c"/><rect x="1037" y="520" width="23" height="26" fill="#013271"/><rect x="1060" y="520" width="22" height="26" fill="#3c4a6c"/><rect x="1082" y="520" width="23" height="26" fill="#002a61"/><rect x="1105" y="520" width="22" height="26" fill="#00224e"/><rect x="1127" y="520" width="23" height="26" fill="#1e3a6f"/><rect x="1150" y="520" width="22" height="26" fill="#00224e"/><rect x="1172" y="520" width="23" height="26" fill="#00224e"/><rect x="1195" y="520" width="22" height="26" fill="#00224e"/><rect x="1217" y="520" width="23" height="26" fill="#002a61"/><rect x="1240" y="520" width="22" height="26" fill="#00224e"/><rect x="1262" y="520" width="23" height="26" fill="#00224e"/><rect x="1285" y="520" width="22" height="26" fill="#002a61"/><rect x="1307" y="520" width="23" height="26" fill="#00224e"/><rect x="1330" y="520" width="22" height="26" fill="#52596d"/><rect x="767" y="546" width="23" height="26" fill="#f5dc41"/><rect x="790" y="546" width="22" height="26" fill="#002a61"/><rect x="812" y="546" width="23" height="26" fill="#2e416d"/><rect x="835" y="546" width="22" height="26" fill="#013271"/><rect x="857" y="546" width="23" height="26" fill="#002a61"/><rect x="880" y="546" width="22" height="26" fill="#dac65b"/><rect x="902" y="546" width="23" height="26" fill="#9b9476"/><rect x="925" y="546" width="22" height="26" fill="#002a61"/><rect x="947" y="546" width="23" height="26" fill="#1e3a6f"/><rect x="970" y="546" width="22" height="26" fill="#013271"/><rect x="992" y="546" width="23" height="26" fill="#00224e"/><rect x="1015" y="546" width="22" height="26" fill="#2e416d"/><rect x="1037" y="546" width="23" height="26" fill="#002a61"/><rect x="1060" y="546" width="22" height="26" fill="#002a61"/><rect x="1082" y="546" width="23" height="26" fill="#002a61"/><rect x="1105" y="546" width="22" height="26" fill="#002a61"/><rect x="1127" y="546" width="23" height="26" fill="#00224e"/><rect x="1150" y="546" width="22" height="26" fill="#013271"/><rect x="1172" y="546" width="23" height="26" fill="#013271"/><rect x="1195" y="546" width="22" height="26" fill="#00224e"/><rect x="1217" y="546" width="23" height="26" fill="#00224e"/><rect x="1240" y="546" width="22" height="26" fill="#013271"/><rect x="1262" y="546" width="23" height="26" fill="#00224e"/><rect x="1285" y="546" width="22" height="26" fill="#1e3a6f"/><rect x="1307" y="546" width="23" height="26" fill="#002a61"/><rect x="1330" y="546" width="22" height="26" fill="#2e416d"/><rect x="767" y="572" width="23" height="26" fill="#fee838"/><rect x="790" y="572" width="22" height="26" fill="#47516c"/><rect x="812" y="572" width="23" height="26" fill="#013271"/><rect x="835" y="572" width="22" height="26" fill="#00224e"/><rect x="857" y="572" width="23" height="26" fill="#013271"/><rect x="880" y="572" width="22" height="26" fill="#5d616e"/><rect x="902" y="572" width="23" height="26" fill="#52596d"/><rect x="925" y="572" width="22" height="26" fill="#1e3a6f"/><rect x="947" y="572" width="23" height="26" fill="#013271"/><rect x="970" y="572" width="22" height="26" fill="#013271"/><rect x="992" y="572" width="23" height="26" fill="#002a61"/><rect x="1015" y="572" width="22" height="26" fill="#002a61"/><rect x="1037" y="572" width="23" height="26" fill="#002a61"/><rect x="1060" y="572" width="22" height="26" fill="#2e416d"/><rect x="1082" y="572" width="23" height="26" fill="#00224e"/><rect x="1105" y="572" width="22" height="26" fill="#002a61"/><rect x="1127" y="572" width="23" height="26" fill="#00224e"/><rect x="1150" y="572" width="22" height="26" fill="#00224e"/><rect x="1172" y="572" width="23" height="26" fill="#00224e"/><rect x="1195" y="572" width="22" height="26" fill="#002a61"/><rect x="1217" y="572" width="23" height="26" fill="#013271"/><rect x="1240" y="572" width="22" height="26" fill="#00224e"/><rect x="1262" y="572" width="23" height="26" fill="#002a61"/><rect x="1285" y="572" width="22" height="26" fill="#002a61"/><rect x="1307" y="572" width="23" height="26" fill="#47516c"/><rect x="1330" y="572" width="22" height="26" fill="#b4a76f"/><rect x="790" y="598" width="22" height="26" fill="#707173"/><rect x="812" y="598" width="23" height="26" fill="#1e3a6f"/><rect x="835" y="598" width="22" height="26" fill="#2e416d"/><rect x="857" y="598" width="23" height="26" fill="#002a61"/><rect x="880" y="598" width="22" height="26" fill="#707173"/><rect x="902" y="598" width="23" height="26" fill="#5d616e"/><rect x="925" y="598" width="22" height="26" fill="#47516c"/><rect x="947" y="598" width="23" height="26" fill="#013271"/><rect x="970" y="598" width="22" height="26" fill="#002a61"/><rect x="992" y="598" width="23" height="26" fill="#002a61"/><rect x="1015" y="598" width="22" height="26" fill="#3c4a6c"/><rect x="1037" y="598" width="23" height="26" fill="#00224e"/><rect x="1060" y="598" width="22" height="26" fill="#002a61"/><rect x="1082" y="598" width="23" height="26" fill="#00224e"/><rect x="1105" y="598" width="22" height="26" fill="#1e3a6f"/><rect x="1127" y="598" width="23" height="26" fill="#00224e"/><rect x="1150" y="598" width="22" height="26" fill="#013271"/><rect x="1172" y="598" width="23" height="26" fill="#1e3a6f"/><rect x="1195" y="598" width="22" height="26" fill="#00224e"/><rect x="1217" y="598" width="23" height="26" fill="#3c4a6c"/><rect x="1240" y="598" width="22" height="26" fill="#00224e"/><rect x="1262" y="598" width="23" height="26" fill="#002a61"/><rect x="1285" y="598" width="22" height="26" fill="#00224e"/><rect x="1307" y="598" width="23" height="26" fill="#47516c"/><rect x="790" y="624" width="22" height="25" fill="#fee838"/><rect x="812" y="624" width="23" height="25" fill="#2e416d"/><rect x="835" y="624" width="22" height="25" fill="#2e416d"/><rect x="857" y="624" width="23" height="25" fill="#013271"/><rect x="880" y="624" width="22" height="25" fill="#00224e"/><rect x="902" y="624" width="23" height="25" fill="#2e416d"/><rect x="925" y="624" width="22" height="25" fill="#00224e"/><rect x="947" y="624" width="23" height="25" fill="#002a61"/><rect x="970" y="624" width="22" height="25" fill="#013271"/><rect x="992" y="624" width="23" height="25" fill="#013271"/><rect x="1015" y="624" width="22" height="25" fill="#013271"/><rect x="1037" y="624" width="23" height="25" fill="#00224e"/><rect x="1060" y="624" width="22" height="25" fill="#00224e"/><rect x="1082" y="624" width="23" height="25" fill="#00224e"/><rect x="1105" y="624" width="22" height="25" fill="#00224e"/><rect x="1127" y="624" width="23" height="25" fill="#00224e"/><rect x="1150" y="624" width="22" height="25" fill="#013271"/><rect x="1172" y="624" width="23" height="25" fill="#002a61"/><rect x="1195" y="624" width="22" height="25" fill="#00224e"/><rect x="1217" y="624" width="23" height="25" fill="#00224e"/><rect x="1240" y="624" width="22" height="25" fill="#002a61"/><rect x="1262" y="624" width="23" height="25" fill="#00224e"/><rect x="1285" y="624" width="22" height="25" fill="#002a61"/><rect x="1307" y="624" width="23" height="25" fill="#3c4a6c"/><rect x="812" y="649" width="23" height="26" fill="#e7d150"/><rect x="835" y="649" width="22" height="26" fill="#2e416d"/><rect x="857" y="649" width="23" height="26" fill="#00224e"/><rect x="880" y="649" width="22" height="26" fill="#3c4a6c"/><rect x="902" y="649" width="23" height="26" fill="#002a61"/><rect x="925" y="649" width="22" height="26" fill="#002a61"/><rect x="947" y="649" width="23" height="26" fill="#00224e"/><rect x="970" y="649" width="22" height="26" fill="#00224e"/><rect x="992" y="649" width="23" height="26" fill="#00224e"/><rect x="1015" y="649" width="22" height="26" fill="#1e3a6f"/><rect x="1037" y="649" width="23" height="26" fill="#00224e"/><rect x="1060" y="649" width="22" height="26" fill="#00224e"/><rect x="1082" y="649" width="23" height="26" fill="#002a61"/><rect x="1105" y="649" width="22" height="26" fill="#002a61"/><rect x="1127" y="649" width="23" height="26" fill="#00224e"/><rect x="1150" y="649" width="22" height="26" fill="#013271"/><rect x="1172" y="649" width="23" height="26" fill="#2e416d"/><rect x="1195" y="649" width="22" height="26" fill="#00224e"/><rect x="1217" y="649" width="23" height="26" fill="#00224e"/><rect x="1240" y="649" width="22" height="26" fill="#002a61"/><rect x="1262" y="649" width="23" height="26" fill="#013271"/><rect x="1285" y="649" width="22" height="26" fill="#002a61"/><rect x="835" y="675" width="22" height="26" fill="#2e416d"/><rect x="857" y="675" width="23" height="26" fill="#013271"/><rect x="880" y="675" width="22" height="26" fill="#002a61"/><rect x="902" y="675" width="23" height="26" fill="#013271"/><rect x="925" y="675" width="22" height="26" fill="#2e416d"/><rect x="947" y="675" width="23" height="26" fill="#002a61"/><rect x="970" y="675" width="22" height="26" fill="#013271"/><rect x="992" y="675" width="23" height="26" fill="#002a61"/><rect x="1015" y="675" width="22" height="26" fill="#002a61"/><rect x="1037" y="675" width="23" height="26" fill="#013271"/><rect x="1060" y="675" width="22" height="26" fill="#00224e"/><rect x="1082" y="675" width="23" height="26" fill="#002a61"/><rect x="1105" y="675" width="22" height="26" fill="#1e3a6f"/><rect x="1127" y="675" width="23" height="26" fill="#00224e"/><rect x="1150" y="675" width="22" height="26" fill="#00224e"/><rect x="1172" y="675" width="23" height="26" fill="#00224e"/><rect x="1195" y="675" width="22" height="26" fill="#00224e"/><rect x="1217" y="675" width="23" height="26" fill="#002a61"/><rect x="1240" y="675" width="22" height="26" fill="#2e416d"/><rect x="1262" y="675" width="23" height="26" fill="#3c4a6c"/><rect x="857" y="701" width="23" height="26" fill="#52596d"/><rect x="880" y="701" width="22" height="26" fill="#3c4a6c"/><rect x="902" y="701" width="23" height="26" fill="#52596d"/><rect x="925" y="701" width="22" height="26" fill="#52596d"/><rect x="947" y="701" width="23" height="26" fill="#5d616e"/><rect x="970" y="701" width="22" height="26" fill="#47516c"/><rect x="992" y="701" width="23" height="26" fill="#00224e"/><rect x="1015" y="701" width="22" height="26" fill="#013271"/><rect x="1037" y="701" width="23" height="26" fill="#00224e"/><rect x="1060" y="701" width="22" height="26" fill="#00224e"/><rect x="1082" y="701" width="23" height="26" fill="#00224e"/><rect x="1105" y="701" width="22" height="26" fill="#00224e"/><rect x="1127" y="701" width="23" height="26" fill="#002a61"/><rect x="1150" y="701" width="22" height="26" fill="#002a61"/><rect x="1172" y="701" width="23" height="26" fill="#00224e"/><rect x="1195" y="701" width="22" height="26" fill="#013271"/><rect x="1217" y="701" width="23" height="26" fill="#7a7a78"/><rect x="1240" y="701" width="22" height="26" fill="#013271"/><rect x="880" y="727" width="22" height="25" fill="#f5dc41"/><rect x="902" y="727" width="23" height="25" fill="#908b78"/><rect x="925" y="727" width="22" height="25" fill="#707173"/><rect x="947" y="727" width="23" height="25" fill="#47516c"/><rect x="970" y="727" width="22" height="25" fill="#1e3a6f"/><rect x="992" y="727" width="23" height="25" fill="#00224e"/><rect x="1015" y="727" width="22" height="25" fill="#013271"/><rect x="1037" y="727" width="23" height="25" fill="#002a61"/><rect x="1060" y="727" width="22" height="25" fill="#1e3a6f"/><rect x="1082" y="727" width="23" height="25" fill="#00224e"/><rect x="1105" y="727" width="22" height="25" fill="#002a61"/><rect x="1127" y="727" width="23" height="25" fill="#002a61"/><rect x="1150" y="727" width="22" height="25" fill="#002a61"/><rect x="1172" y="727" width="23" height="25" fill="#1e3a6f"/><rect x="1195" y="727" width="22" height="25" fill="#013271"/><rect x="1217" y="727" width="23" height="25" fill="#908b78"/><rect x="925" y="752" width="22" height="26" fill="#7a7a78"/><rect x="947" y="752" width="23" height="26" fill="#52596d"/><rect x="970" y="752" width="22" height="26" fill="#2e416d"/><rect x="992" y="752" width="23" height="26" fill="#002a61"/><rect x="1015" y="752" width="22" height="26" fill="#2e416d"/><rect x="1037" y="752" width="23" height="26" fill="#47516c"/><rect x="1060" y="752" width="22" height="26" fill="#013271"/><rect x="1082" y="752" width="23" height="26" fill="#2e416d"/><rect x="1105" y="752" width="22" height="26" fill="#3c4a6c"/><rect x="1127" y="752" width="23" height="26" fill="#002a61"/><rect x="1150" y="752" width="22" height="26" fill="#00224e"/><rect x="1172" y="752" width="23" height="26" fill="#707173"/><rect x="992" y="778" width="23" height="26" fill="#666970"/><rect x="1015" y="778" width="22" height="26" fill="#3c4a6c"/><rect x="1037" y="778" width="23" height="26" fill="#9b9476"/><rect x="1060" y="778" width="22" height="26" fill="#00224e"/><rect x="1082" y="778" width="23" height="26" fill="#7a7a78"/><rect x="1105" y="778" width="22" height="26" fill="#666970"/></g><path d="M925 237.5H1195M880 263.5H1240M812 340.5H1307M790 366.5H1330M767 469.5H1352M767 495.5H1352M767 572.5H1352M767 598.5H1352M790 624.5H1330M835 701.5H1285M857 727.5H1262M812.5 340V675M857.5 288V727M902.5 263V752M947.5 237V778M992.5 211V804M1037.5 211V804M1082.5 211V804M1127.5 211V804M1172.5 237V778M1217.5 263V752M1262.5 288V727M1307.5 340V675" stroke="#ffffff" stroke-opacity="0.260" stroke-width="1" fill="none"/><path d="M857 288.5H1262M835 314.5H1285M790 391.5H1330M767 417.5H1352M767 443.5H1352M767 520.5H1352M767 546.5H1352M790 649.5H1330M812 675.5H1307M880 752.5H1240M925 778.5H1195" stroke="#ffffff" stroke-opacity="0.060" stroke-width="1" fill="none"/><g font-size="12.300" letter-spacing="-0.300" text-anchor="middle" fill="#fff"><text x="1048.2" y="229">14</text><text x="935.7" y="255">14</text><text x="958.2" y="255">21</text><text x="980.7" y="255">22</text><text x="1003.2" y="255">20</text><text x="1025.7" y="255">22</text><text x="1048.2" y="255">22</text><text x="1070.7" y="255">21</text><text x="1093.2" y="255">21</text><text x="1115.7" y="255">18</text><text x="1138.2" y="255">14</text><text x="913.2" y="280.5">19</text><text x="935.7" y="280.5">20</text><text x="958.2" y="280.5">21</text><text x="980.7" y="280.5">23</text><text x="1003.2" y="280.5">22</text><text x="1025.7" y="280.5">19</text><text x="1048.2" y="280.5">20</text><text x="1070.7" y="280.5">22</text><text x="1093.2" y="280.5">18</text><text x="1115.7" y="280.5">21</text><text x="1138.2" y="280.5">21</text><text x="1160.7" y="280.5">22</text><text x="1183.2" y="280.5">22</text><text x="1205.7" y="280.5">20</text><text x="868.2" y="306">16</text><text x="890.7" y="306">20</text><text x="913.2" y="306">23</text><text x="935.7" y="306">21</text><text x="958.2" y="306">20</text><text x="980.7" y="306">22</text><text x="1003.2" y="306">22</text><text x="1025.7" y="306">20</text><text x="1048.2" y="306">20</text><text x="1070.7" y="306">18</text><text x="1093.2" y="306">22</text><text x="1115.7" y="306">22</text><text x="1138.2" y="306">21</text><text x="1160.7" y="306">19</text><text x="1183.2" y="306">20</text><text x="1205.7" y="306">22</text><text x="1250.7" y="306">21</text><text x="845.7" y="332">15</text><text x="868.2" y="332">18</text><text x="890.7" y="332">20</text><text x="913.2" y="332">17</text><text x="935.7" y="332">21</text><text x="958.2" y="332">22</text><text x="980.7" y="332">22</text><text x="1003.2" y="332">18</text><text x="1025.7" y="332">21</text><text x="1048.2" y="332">16</text><text x="1070.7" y="332">20</text><text x="1093.2" y="332">20</text><text x="1115.7" y="332">20</text><text x="1138.2" y="332">18</text><text x="1160.7" y="332">22</text><text x="1183.2" y="332">19</text><text x="1205.7" y="332">20</text><text x="1250.7" y="332">21</text><text x="823.2" y="358">14</text><text x="845.7" y="358">23</text><text x="868.2" y="358">19</text><text x="890.7" y="358">23</text><text x="913.2" y="358">20</text><text x="935.7" y="358">21</text><text x="958.2" y="358">20</text><text x="980.7" y="358">21</text><text x="1003.2" y="358">22</text><text x="1025.7" y="358">21</text><text x="1048.2" y="358">22</text><text x="1070.7" y="358">22</text><text x="1093.2" y="358">20</text><text x="1115.7" y="358">21</text><text x="1138.2" y="358">19</text><text x="1160.7" y="358">20</text><text x="1183.2" y="358">18</text><text x="1205.7" y="358">17</text><text x="1228.2" y="358">20</text><text x="1250.7" y="358">22</text><text x="1273.2" y="358">15</text><text x="1295.7" y="358">17</text><text x="823.2" y="383.5">15</text><text x="845.7" y="383.5">22</text><text x="868.2" y="383.5">21</text><text x="890.7" y="383.5">21</text><text x="913.2" y="383.5">19</text><text x="935.7" y="383.5">20</text><text x="958.2" y="383.5">19</text><text x="980.7" y="383.5">22</text><text x="1003.2" y="383.5">22</text><text x="1025.7" y="383.5">21</text><text x="1048.2" y="383.5">21</text><text x="1070.7" y="383.5">23</text><text x="1093.2" y="383.5">22</text><text x="1115.7" y="383.5">21</text><text x="1138.2" y="383.5">18</text><text x="1160.7" y="383.5">21</text><text x="1183.2" y="383.5">21</text><text x="1205.7" y="383.5">19</text><text x="1228.2" y="383.5">21</text><text x="1250.7" y="383.5">22</text><text x="1273.2" y="383.5">23</text><text x="1295.7" y="383.5">18</text><text x="800.7" y="409">21</text><text x="823.2" y="409">20</text><text x="845.7" y="409">22</text><text x="868.2" y="409">20</text><text x="890.7" y="409">21</text><text x="913.2" y="409">22</text><text x="935.7" y="409">21</text><text x="958.2" y="409">21</text><text x="980.7" y="409">21</text><text x="1003.2" y="409">20</text><text x="1025.7" y="409">22</text><text x="1048.2" y="409">21</text><text x="1070.7" y="409">21</text><text x="1093.2" y="409">23</text><text x="1115.7" y="409">20</text><text x="1138.2" y="409">22</text><text x="1160.7" y="409">20</text><text x="1183.2" y="409">22</text><text x="1205.7" y="409">20</text><text x="1228.2" y="409">21</text><text x="1250.7" y="409">23</text><text x="1273.2" y="409">21</text><text x="1295.7" y="409">19</text><text x="1318.2" y="409">16</text><text x="800.7" y="435">20</text><text x="823.2" y="435">19</text><text x="845.7" y="435">22</text><text x="868.2" y="435">21</text><text x="890.7" y="435">14</text><text x="913.2" y="435">20</text><text x="935.7" y="435">21</text><text x="958.2" y="435">21</text><text x="980.7" y="435">22</text><text x="1003.2" y="435">20</text><text x="1025.7" y="435">21</text><text x="1048.2" y="435">21</text><text x="1070.7" y="435">22</text><text x="1093.2" y="435">21</text><text x="1115.7" y="435">21</text><text x="1138.2" y="435">18</text><text x="1160.7" y="435">19</text><text x="1183.2" y="435">21</text><text x="1205.7" y="435">20</text><text x="1228.2" y="435">22</text><text x="1250.7" y="435">22</text><text x="1273.2" y="435">20</text><text x="1295.7" y="435">22</text><text x="1318.2" y="435">20</text><text x="778.2" y="461">14</text><text x="800.7" y="461">19</text><text x="823.2" y="461">21</text><text x="845.7" y="461">18</text><text x="868.2" y="461">19</text><text x="890.7" y="461">19</text><text x="913.2" y="461">23</text><text x="935.7" y="461">20</text><text x="958.2" y="461">23</text><text x="980.7" y="461">18</text><text x="1003.2" y="461">21</text><text x="1025.7" y="461">18</text><text x="1048.2" y="461">21</text><text x="1070.7" y="461">20</text><text x="1093.2" y="461">20</text><text x="1115.7" y="461">21</text><text x="1138.2" y="461">22</text><text x="1160.7" y="461">20</text><text x="1183.2" y="461">19</text><text x="1205.7" y="461">21</text><text x="1228.2" y="461">21</text><text x="1250.7" y="461">21</text><text x="1273.2" y="461">20</text><text x="1295.7" y="461">19</text><text x="1318.2" y="461">20</text><text x="1340.7" y="461">16</text><text x="778.2" y="487">16</text><text x="800.7" y="487">20</text><text x="823.2" y="487">19</text><text x="845.7" y="487">20</text><text x="868.2" y="487">23</text><text x="890.7" y="487">21</text><text x="913.2" y="487">21</text><text x="935.7" y="487">22</text><text x="958.2" y="487">20</text><text x="980.7" y="487">18</text><text x="1003.2" y="487">22</text><text x="1025.7" y="487">20</text><text x="1048.2" y="487">22</text><text x="1070.7" y="487">20</text><text x="1093.2" y="487">20</text><text x="1115.7" y="487">22</text><text x="1138.2" y="487">21</text><text x="1160.7" y="487">20</text><text x="1183.2" y="487">21</text><text x="1205.7" y="487">19</text><text x="1228.2" y="487">21</text><text x="1250.7" y="487">22</text><text x="1273.2" y="487">19</text><text x="1295.7" y="487">22</text><text x="1318.2" y="487">22</text><text x="1340.7" y="487">18</text><text x="778.2" y="512.5">17</text><text x="800.7" y="512.5">20</text><text x="823.2" y="512.5">20</text><text x="845.7" y="512.5">21</text><text x="868.2" y="512.5">23</text><text x="890.7" y="512.5">23</text><text x="913.2" y="512.5">23</text><text x="935.7" y="512.5">23</text><text x="958.2" y="512.5">22</text><text x="980.7" y="512.5">19</text><text x="1003.2" y="512.5">22</text><text x="1025.7" y="512.5">15</text><text x="1048.2" y="512.5">14</text><text x="1093.2" y="512.5">19</text><text x="1115.7" y="512.5">18</text><text x="1138.2" y="512.5">22</text><text x="1160.7" y="512.5">20</text><text x="1183.2" y="512.5">19</text><text x="1205.7" y="512.5">23</text><text x="1228.2" y="512.5">23</text><text x="1250.7" y="512.5">20</text><text x="1273.2" y="512.5">21</text><text x="1295.7" y="512.5">20</text><text x="1318.2" y="512.5">22</text><text x="1340.7" y="512.5">16</text><text x="800.7" y="538">21</text><text x="823.2" y="538">21</text><text x="845.7" y="538">20</text><text x="868.2" y="538">17</text><text x="890.7" y="538">20</text><text x="913.2" y="538">21</text><text x="935.7" y="538">22</text><text x="958.2" y="538">23</text><text x="980.7" y="538">21</text><text x="1003.2" y="538">22</text><text x="1025.7" y="538">17</text><text x="1048.2" y="538">20</text><text x="1070.7" y="538">17</text><text x="1093.2" y="538">21</text><text x="1115.7" y="538">23</text><text x="1138.2" y="538">19</text><text x="1160.7" y="538">22</text><text x="1183.2" y="538">22</text><text x="1205.7" y="538">22</text><text x="1228.2" y="538">21</text><text x="1250.7" y="538">22</text><text x="1273.2" y="538">22</text><text x="1295.7" y="538">21</text><text x="1318.2" y="538">22</text><text x="1340.7" y="538">15</text><text x="800.7" y="564">21</text><text x="823.2" y="564">18</text><text x="845.7" y="564">20</text><text x="868.2" y="564">21</text><text x="935.7" y="564">21</text><text x="958.2" y="564">19</text><text x="980.7" y="564">20</text><text x="1003.2" y="564">22</text><text x="1025.7" y="564">18</text><text x="1048.2" y="564">21</text><text x="1070.7" y="564">21</text><text x="1093.2" y="564">21</text><text x="1115.7" y="564">21</text><text x="1138.2" y="564">22</text><text x="1160.7" y="564">20</text><text x="1183.2" y="564">20</text><text x="1205.7" y="564">22</text><text x="1228.2" y="564">22</text><text x="1250.7" y="564">20</text><text x="1273.2" y="564">23</text><text x="1295.7" y="564">19</text><text x="1318.2" y="564">21</text><text x="1340.7" y="564">18</text><text x="800.7" y="590">16</text><text x="823.2" y="590">20</text><text x="845.7" y="590">22</text><text x="868.2" y="590">20</text><text x="890.7" y="590">14</text><text x="913.2" y="590">15</text><text x="935.7" y="590">19</text><text x="958.2" y="590">20</text><text x="980.7" y="590">20</text><text x="1003.2" y="590">21</text><text x="1025.7" y="590">21</text><text x="1048.2" y="590">21</text><text x="1070.7" y="590">18</text><text x="1093.2" y="590">22</text><text x="1115.7" y="590">21</text><text x="1138.2" y="590">23</text><text x="1160.7" y="590">23</text><text x="1183.2" y="590">23</text><text x="1205.7" y="590">21</text><text x="1228.2" y="590">20</text><text x="1250.7" y="590">22</text><text x="1273.2" y="590">21</text><text x="1295.7" y="590">21</text><text x="1318.2" y="590">16</text><text x="823.2" y="616">19</text><text x="845.7" y="616">18</text><text x="868.2" y="616">21</text><text x="913.2" y="616">14</text><text x="935.7" y="616">16</text><text x="958.2" y="616">20</text><text x="980.7" y="616">21</text><text x="1003.2" y="616">21</text><text x="1025.7" y="616">17</text><text x="1048.2" y="616">22</text><text x="1070.7" y="616">21</text><text x="1093.2" y="616">23</text><text x="1115.7" y="616">19</text><text x="1138.2" y="616">23</text><text x="1160.7" y="616">20</text><text x="1183.2" y="616">19</text><text x="1205.7" y="616">22</text><text x="1228.2" y="616">17</text><text x="1250.7" y="616">23</text><text x="1273.2" y="616">21</text><text x="1295.7" y="616">22</text><text x="1318.2" y="616">16</text><text x="823.2" y="641.5">18</text><text x="845.7" y="641.5">18</text><text x="868.2" y="641.5">20</text><text x="890.7" y="641.5">23</text><text x="913.2" y="641.5">18</text><text x="935.7" y="641.5">22</text><text x="958.2" y="641.5">21</text><text x="980.7" y="641.5">20</text><text x="1003.2" y="641.5">20</text><text x="1025.7" y="641.5">20</text><text x="1048.2" y="641.5">22</text><text x="1070.7" y="641.5">22</text><text x="1093.2" y="641.5">22</text><text x="1115.7" y="641.5">22</text><text x="1138.2" y="641.5">22</text><text x="1160.7" y="641.5">20</text><text x="1183.2" y="641.5">21</text><text x="1205.7" y="641.5">22</text><text x="1228.2" y="641.5">23</text><text x="1250.7" y="641.5">21</text><text x="1273.2" y="641.5">22</text><text x="1295.7" y="641.5">21</text><text x="1318.2" y="641.5">17</text><text x="845.7" y="667">18</text><text x="868.2" y="667">22</text><text x="890.7" y="667">17</text><text x="913.2" y="667">21</text><text x="935.7" y="667">21</text><text x="958.2" y="667">22</text><text x="980.7" y="667">23</text><text x="1003.2" y="667">22</text><text x="1025.7" y="667">19</text><text x="1048.2" y="667">22</text><text x="1070.7" y="667">22</text><text x="1093.2" y="667">21</text><text x="1115.7" y="667">21</text><text x="1138.2" y="667">22</text><text x="1160.7" y="667">20</text><text x="1183.2" y="667">18</text><text x="1205.7" y="667">22</text><text x="1228.2" y="667">23</text><text x="1250.7" y="667">21</text><text x="1273.2" y="667">20</text><text x="1295.7" y="667">21</text><text x="845.7" y="693">18</text><text x="868.2" y="693">20</text><text x="890.7" y="693">21</text><text x="913.2" y="693">20</text><text x="935.7" y="693">18</text><text x="958.2" y="693">21</text><text x="980.7" y="693">20</text><text x="1003.2" y="693">21</text><text x="1025.7" y="693">21</text><text x="1048.2" y="693">20</text><text x="1070.7" y="693">23</text><text x="1093.2" y="693">21</text><text x="1115.7" y="693">19</text><text x="1138.2" y="693">23</text><text x="1160.7" y="693">22</text><text x="1183.2" y="693">22</text><text x="1205.7" y="693">22</text><text x="1228.2" y="693">21</text><text x="1250.7" y="693">18</text><text x="1273.2" y="693">17</text><text x="868.2" y="719">15</text><text x="890.7" y="719">17</text><text x="913.2" y="719">15</text><text x="935.7" y="719">15</text><text x="958.2" y="719">14</text><text x="980.7" y="719">16</text><text x="1003.2" y="719">22</text><text x="1025.7" y="719">20</text><text x="1048.2" y="719">22</text><text x="1070.7" y="719">22</text><text x="1093.2" y="719">22</text><text x="1115.7" y="719">23</text><text x="1138.2" y="719">21</text><text x="1160.7" y="719">21</text><text x="1183.2" y="719">23</text><text x="1205.7" y="719">20</text><text x="1250.7" y="719">20</text><text x="958.2" y="744.5">16</text><text x="980.7" y="744.5">19</text><text x="1003.2" y="744.5">23</text><text x="1025.7" y="744.5">20</text><text x="1048.2" y="744.5">21</text><text x="1070.7" y="744.5">19</text><text x="1093.2" y="744.5">22</text><text x="1115.7" y="744.5">21</text><text x="1138.2" y="744.5">21</text><text x="1160.7" y="744.5">21</text><text x="1183.2" y="744.5">19</text><text x="1205.7" y="744.5">20</text><text x="958.2" y="770">15</text><text x="980.7" y="770">18</text><text x="1003.2" y="770">21</text><text x="1025.7" y="770">18</text><text x="1048.2" y="770">16</text><text x="1070.7" y="770">20</text><text x="1093.2" y="770">18</text><text x="1115.7" y="770">17</text><text x="1138.2" y="770">21</text><text x="1160.7" y="770">22</text><text x="1025.7" y="796">17</text><text x="1070.7" y="796">22</text></g><g font-size="12.300" letter-spacing="-0.300" text-anchor="middle" fill="#000"><text x="1003.2" y="229">5</text><text x="1025.7" y="229">13</text><text x="1070.7" y="229">12</text><text x="1093.2" y="229">10</text><text x="1115.7" y="229">5</text><text x="1160.7" y="255">13</text><text x="1183.2" y="255">9</text><text x="890.7" y="280.5">10</text><text x="1228.2" y="280.5">10</text><text x="1228.2" y="306">12</text><text x="1228.2" y="332">11</text><text x="1273.2" y="332">2</text><text x="800.7" y="383.5">2</text><text x="1318.2" y="383.5">10</text><text x="778.2" y="435">0</text><text x="1340.7" y="435">1</text><text x="1070.7" y="512.5">13</text><text x="778.2" y="538">9</text><text x="778.2" y="564">1</text><text x="890.7" y="564">3</text><text x="913.2" y="564">8</text><text x="778.2" y="590">0</text><text x="1340.7" y="590">6</text><text x="800.7" y="616">12</text><text x="890.7" y="616">12</text><text x="800.7" y="641.5">0</text><text x="823.2" y="667">2</text><text x="1228.2" y="719">11</text><text x="890.7" y="744.5">1</text><text x="913.2" y="744.5">9</text><text x="935.7" y="744.5">12</text><text x="1228.2" y="744.5">9</text><text x="935.7" y="770">11</text><text x="1183.2" y="770">12</text><text x="1003.2" y="796">13</text><text x="1048.2" y="796">8</text><text x="1093.2" y="796">11</text><text x="1115.7" y="796">13</text></g><path d="M767.500 211V804.3M761 211.5H767.500M761 237.5H767.500M761 263.5H767.500M761 288.5H767.500M761 314.5H767.500M761 340.5H767.500M761 366.5H767.500M761 391.5H767.500M761 417.5H767.500M761 443.5H767.500M761 469.5H767.500M761 495.5H767.500M761 520.5H767.500M761 546.5H767.500M761 572.5H767.500M761 598.5H767.500M761 624.5H767.500M761 649.5H767.500M761 675.5H767.500M761 701.5H767.500M761 727.5H767.500M761 752.5H767.500M761 778.5H767.500M761 804.5H767.500M767 804H1352.5M767.5 804V811M790.5 804V811M812.5 804V811M835.5 804V811M857.5 804V811M880.5 804V811M902.5 804V811M925.5 804V811M947.5 804V811M970.5 804V811M992.5 804V811M1015.5 804V811M1037.5 804V811M1060.5 804V811M1082.5 804V811M1105.5 804V811M1127.5 804V811M1150.5 804V811M1172.5 804V811M1195.5 804V811M1217.5 804V811M1240.5 804V811M1262.5 804V811M1285.5 804V811M1307.5 804V811M1330.5 804V811M1352.5 804V811" stroke="#929292" stroke-width="1" fill="none"/><g font-size="12.300" letter-spacing="-0.400" fill="#000"><text x="757.200" y="216" text-anchor="end">0</text><text x="757.200" y="242" text-anchor="end">1</text><text x="757.200" y="268" text-anchor="end">2</text><text x="757.200" y="293" text-anchor="end">3</text><text x="757.200" y="319" text-anchor="end">4</text><text x="757.200" y="345" text-anchor="end">5</text><text x="757.200" y="371" text-anchor="end">6</text><text x="757.200" y="396" text-anchor="end">7</text><text x="757.200" y="422" text-anchor="end">8</text><text x="757.200" y="448" text-anchor="end">9</text><text x="757.200" y="474" text-anchor="end">10</text><text x="757.200" y="500" text-anchor="end">11</text><text x="757.200" y="525" text-anchor="end">12</text><text x="757.200" y="551" text-anchor="end">13</text><text x="757.200" y="577" text-anchor="end">14</text><text x="757.200" y="603" text-anchor="end">15</text><text x="757.200" y="629" text-anchor="end">16</text><text x="757.200" y="654" text-anchor="end">17</text><text x="757.200" y="680" text-anchor="end">18</text><text x="757.200" y="706" text-anchor="end">19</text><text x="757.200" y="732" text-anchor="end">20</text><text x="757.200" y="757" text-anchor="end">21</text><text x="757.200" y="783" text-anchor="end">22</text><text x="757.200" y="809" text-anchor="end">23</text><text x="766.4" y="824.700" text-anchor="middle">0</text><text x="789.4" y="824.700" text-anchor="middle">1</text><text x="811.4" y="824.700" text-anchor="middle">2</text><text x="834.4" y="824.700" text-anchor="middle">3</text><text x="856.4" y="824.700" text-anchor="middle">4</text><text x="879.4" y="824.700" text-anchor="middle">5</text><text x="901.4" y="824.700" text-anchor="middle">6</text><text x="924.4" y="824.700" text-anchor="middle">7</text><text x="946.4" y="824.700" text-anchor="middle">8</text><text x="969.4" y="824.700" text-anchor="middle">9</text><text x="991.4" y="824.700" text-anchor="middle">10</text><text x="1014.4" y="824.700" text-anchor="middle">11</text><text x="1036.4" y="824.700" text-anchor="middle">12</text><text x="1059.4" y="824.700" text-anchor="middle">13</text><text x="1081.4" y="824.700" text-anchor="middle">14</text><text x="1104.4" y="824.700" text-anchor="middle">15</text><text x="1126.4" y="824.700" text-anchor="middle">16</text><text x="1149.4" y="824.700" text-anchor="middle">17</text><text x="1171.4" y="824.700" text-anchor="middle">18</text><text x="1194.4" y="824.700" text-anchor="middle">19</text><text x="1216.4" y="824.700" text-anchor="middle">20</text><text x="1239.4" y="824.700" text-anchor="middle">21</text><text x="1261.4" y="824.700" text-anchor="middle">22</text><text x="1284.4" y="824.700" text-anchor="middle">23</text><text x="1306.4" y="824.700" text-anchor="middle">24</text><text x="1329.4" y="824.700" text-anchor="middle">25</text><text x="1059" y="844.300" text-anchor="middle">X</text><text transform="translate(734,497) rotate(-90)" text-anchor="middle">Y_AXIS</text></g></svg>
<div style="left:767px;top:211px;width:586px;height:1px;background:#e4e3dc;"></div>
<div style="left:761px;top:211px;width:7px;height:1px;background:#929292;"></div>
<div style="left:718px;top:805px;width:48px;height:48px;border:1px solid #808080;"></div>
<div style="top:811.0px;height:18px;line-height:18px;font-size:12.6px;white-space:pre;font-weight:bold;color:#858585;left:718.0px;width:48px;text-align:center;">Map</div>
<div style="top:829.5px;height:18px;line-height:18px;font-size:12.6px;white-space:pre;font-weight:bold;color:#858585;left:718.0px;width:48px;text-align:center;">Shape</div>
<div style="left:1353px;top:190px;width:40px;height:613px;border:1px solid #808080;"></div>
<div style="left:1333.0px;top:486.5px;width:80px;height:20px;line-height:20px;text-align:center;font-size:12.6px;font-weight:bold;color:#858585;transform:rotate(90deg);white-space:pre;">Group Y</div>
<div style="left:1353px;top:805px;width:40px;height:48px;border:1px solid #808080;"></div>
<div style="top:820.5px;height:18px;line-height:18px;font-size:12.6px;white-space:pre;font-weight:bold;color:#858585;left:1353.0px;width:40px;text-align:center;">Freq</div>
<div style="left:1395px;top:805px;width:98px;height:48px;border:1px solid #808080;"></div>
<div style="top:820.5px;height:18px;line-height:18px;font-size:12.6px;white-space:pre;font-weight:bold;color:#858585;left:1395.0px;width:98px;text-align:center;">Page</div>
<div style="left:1395px;top:168px;width:98px;height:39px;border:1px solid #808080;"></div>
<div style="top:179.0px;height:18px;line-height:18px;font-size:12.6px;white-space:pre;font-weight:bold;color:#858585;left:1395.0px;width:98px;text-align:center;">Overlay</div>
<div style="left:1394px;top:208px;width:100px;height:41px;border:1px solid #e0ded0;"></div>
<div style="top:220.0px;height:18px;line-height:18px;font-size:12.6px;white-space:pre;font-weight:bold;font-style:italic;color:#858585;left:1394.0px;width:100px;text-align:center;">Color: 1</div>
<div style="left:1395px;top:250px;width:98px;height:39px;border:1px solid #808080;"></div>
<div style="top:261.0px;height:18px;line-height:18px;font-size:12.6px;white-space:pre;font-weight:bold;color:#858585;left:1395.0px;width:98px;text-align:center;">Size</div>
<div style="left:1395px;top:291px;width:98px;height:39px;border:1px solid #808080;"></div>
<div style="top:302.0px;height:18px;line-height:18px;font-size:12.6px;white-space:pre;font-weight:bold;color:#858585;left:1395.0px;width:98px;text-align:center;">Interval</div>
<div style="top:339.5px;height:17px;line-height:17px;font-size:12.3px;white-space:pre;color:#222;left:1401px;">1</div>
<svg style="left:0;top:0;" width="1500" height="879" viewBox="0 0 1500 879"><defs><linearGradient id="cg" x1="0" y1="0" x2="0" y2="1"><stop offset="0" stop-color="#00224e"/><stop offset="0.04" stop-color="#002a5f"/><stop offset="0.08" stop-color="#003170"/><stop offset="0.12" stop-color="#1a386f"/><stop offset="0.17" stop-color="#2a3f6d"/><stop offset="0.21" stop-color="#38476c"/><stop offset="0.25" stop-color="#434e6c"/><stop offset="0.29" stop-color="#4d556c"/><stop offset="0.33" stop-color="#575d6d"/><stop offset="0.38" stop-color="#61656f"/><stop offset="0.42" stop-color="#6a6c71"/><stop offset="0.46" stop-color="#737475"/><stop offset="0.5" stop-color="#7d7c78"/><stop offset="0.54" stop-color="#868379"/><stop offset="0.58" stop-color="#918b78"/><stop offset="0.62" stop-color="#9b9476"/><stop offset="0.67" stop-color="#a59c74"/><stop offset="0.71" stop-color="#b0a571"/><stop offset="0.75" stop-color="#bcae6c"/><stop offset="0.79" stop-color="#c6b667"/><stop offset="0.83" stop-color="#d2c060"/><stop offset="0.88" stop-color="#dec958"/><stop offset="0.92" stop-color="#e9d34e"/><stop offset="0.96" stop-color="#f6dd3f"/><stop offset="1" stop-color="#fee838"/></linearGradient></defs><rect x="1400" y="373" width="20" height="121" fill="url(#cg)"/><text x="1454" y="378" text-anchor="end" font-size="12.300">22.5</text><text x="1454" y="402.1" text-anchor="end" font-size="12.300">18.0</text><text x="1454" y="426.2" text-anchor="end" font-size="12.300">13.5</text><text x="1454" y="450.3" text-anchor="end" font-size="12.300">9.0</text><text x="1454" y="474.4" text-anchor="end" font-size="12.300">4.5</text><text x="1454" y="498.5" text-anchor="end" font-size="12.300">0.0</text><path d="M1420 373.5H1424M1420 397.5H1424M1420 421.5H1424M1420 445.5H1424M1420 469.5H1424M1420 494.5H1424" stroke="#8c8c8c" stroke-width="1"/></svg>
</div></body></html>
